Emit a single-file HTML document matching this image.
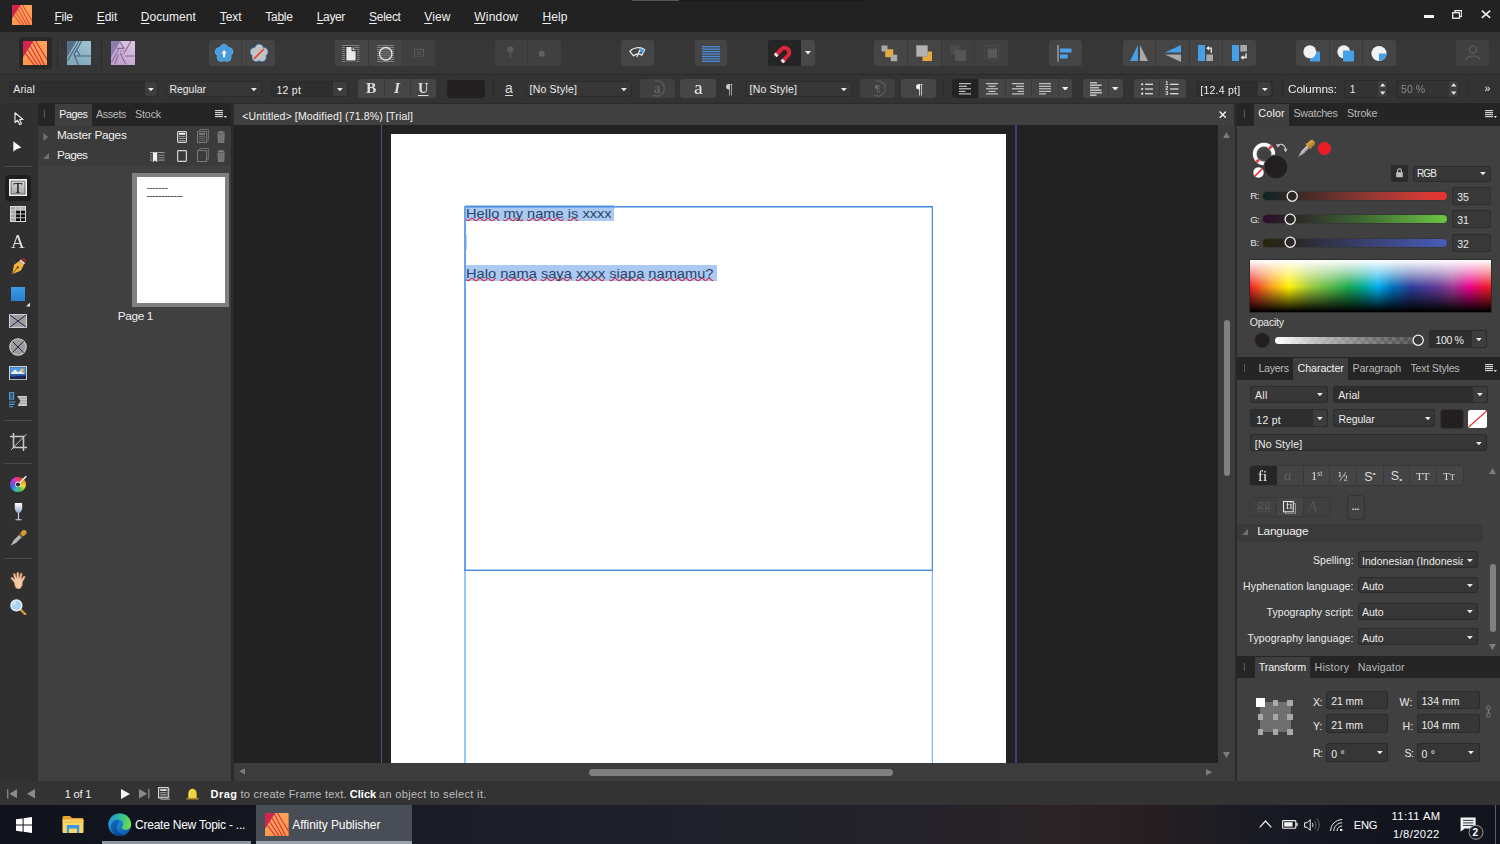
<!DOCTYPE html>
<html lang="en"><head><meta charset="utf-8"><title>Affinity Publisher</title>
<style>
html,body{margin:0;padding:0}
body{width:1500px;height:844px;overflow:hidden;position:relative;background:#2b2b2b;font-family:"Liberation Sans",sans-serif;-webkit-font-smoothing:antialiased}
.b{position:absolute;display:block;box-sizing:border-box}
.t{position:absolute;white-space:nowrap;line-height:1;display:block}
u{text-decoration:underline;text-underline-offset:1.5px;text-decoration-thickness:1px}
</style></head><body>
<div class="b" style="left:0px;top:0px;width:1500px;height:32px;background:#222222;"></div>
<div class="b" style="left:632px;top:0px;width:47px;height:1px;background:#555555;"></div>
<div class="b" style="left:679px;top:0px;width:187px;height:1px;background:#1a1a1a;"></div>
<svg class="b" style="left:11.5px;top:4.5px;" width="20" height="20" viewBox="0 0 24 24"><defs><linearGradient id="pg1" x1="0" y1="0" x2="0.3" y2="1"><stop offset="0" stop-color="#ffa65c"/><stop offset="1" stop-color="#ff9748"/></linearGradient></defs><rect width="24" height="24" fill="url(#pg1)"/><path d="M0 0H10.4L0 16.2Z" fill="#d0264c"/><path d="M13 0L24 18.3M10.4 0L24 23M8.2 3.5L21 24M6.1 6.8L17.6 24M4 10L14.2 24M2.3 12.6L10.9 24" stroke="#cf2b48" stroke-width="1" fill="none" stroke-opacity="0"/><path d="M12.6 0L24 18.6M9.6 1.3L21.4 24M7.2 5L18 24M4.8 8.7L14.6 24M2.4 12.4L11.2 24" stroke="#cf2b48" stroke-width="1.05" fill="none"/></svg>
<span class="t" id="t1" style="top:10.84px;font-size:12px;color:#f0f0f0;left:54.5px;letter-spacing:-0.27px;"><u>F</u>ile</span>
<span class="t" id="t2" style="top:10.84px;font-size:12px;color:#f0f0f0;left:96.7px;letter-spacing:-0.03px;"><u>E</u>dit</span>
<span class="t" id="t3" style="top:10.84px;font-size:12px;color:#f0f0f0;left:140.8px;letter-spacing:0.05px;"><u>D</u>ocument</span>
<span class="t" id="t4" style="top:10.84px;font-size:12px;color:#f0f0f0;left:219.8px;letter-spacing:-0.1px;"><u>T</u>ext</span>
<span class="t" id="t5" style="top:10.84px;font-size:12px;color:#f0f0f0;left:265.2px;letter-spacing:-0.24px;">Ta<u>b</u>le</span>
<span class="t" id="t6" style="top:10.84px;font-size:12px;color:#f0f0f0;left:316.8px;letter-spacing:-0.37px;"><u>L</u>ayer</span>
<span class="t" id="t7" style="top:10.84px;font-size:12px;color:#f0f0f0;left:369.1px;letter-spacing:-0.31px;"><u>S</u>elect</span>
<span class="t" id="t8" style="top:10.84px;font-size:12px;color:#f0f0f0;left:424.3px;letter-spacing:0.12px;"><u>V</u>iew</span>
<span class="t" id="t9" style="top:10.84px;font-size:12px;color:#f0f0f0;left:474.2px;letter-spacing:0.23px;"><u>W</u>indow</span>
<span class="t" id="t10" style="top:10.84px;font-size:12px;color:#f0f0f0;left:542.4px;letter-spacing:0.1px;"><u>H</u>elp</span>
<div class="b" style="left:1424px;top:15px;width:9.5px;height:3px;background:#f2f2f2;"></div>
<svg class="b" style="left:1451.5px;top:9.5px;" width="10.5" height="9" viewBox="0 0 10.5 9"><path d="M3 2.5V0.7H9.8V6.3H8" stroke="#f2f2f2" stroke-width="1.3" fill="none"/><rect x="0.7" y="2.7" width="6.8" height="5.5" stroke="#f2f2f2" stroke-width="1.3" fill="none"/></svg>
<svg class="b" style="left:1480.5px;top:10px;" width="10" height="8.5" viewBox="0 0 10 8.5"><path d="M0.8 0.6L9.2 7.9M9.2 0.6L0.8 7.9" stroke="#f2f2f2" stroke-width="1.5"/></svg>
<div class="b" style="left:0px;top:32px;width:1500px;height:43px;background:linear-gradient(#353535,#383838 55%,#353535);"></div>
<div class="b" style="left:0px;top:74px;width:1500px;height:1px;background:#2a2a2a;"></div>
<div class="b" style="left:19px;top:37px;width:33px;height:32px;background:#292929;border-radius:3px;"></div>
<svg class="b" style="left:23px;top:41px;" width="24" height="24" viewBox="0 0 24 24"><defs><linearGradient id="pg2" x1="0" y1="0" x2="0.3" y2="1"><stop offset="0" stop-color="#ffa65c"/><stop offset="1" stop-color="#ff9748"/></linearGradient></defs><rect width="24" height="24" fill="url(#pg2)"/><path d="M0 0H10.4L0 16.2Z" fill="#d0264c"/><path d="M13 0L24 18.3M10.4 0L24 23M8.2 3.5L21 24M6.1 6.8L17.6 24M4 10L14.2 24M2.3 12.6L10.9 24" stroke="#cf2b48" stroke-width="1" fill="none" stroke-opacity="0"/><path d="M12.6 0L24 18.6M9.6 1.3L21.4 24M7.2 5L18 24M4.8 8.7L14.6 24M2.4 12.4L11.2 24" stroke="#cf2b48" stroke-width="1.05" fill="none"/></svg>
<div class="b" style="left:57px;top:38px;width:1px;height:30px;background:#2b2b2b;"></div>
<div class="b" style="left:101px;top:38px;width:1px;height:30px;background:#2b2b2b;"></div>
<svg class="b" style="left:67px;top:41px;" width="24" height="24" viewBox="0 0 24 24"><defs><linearGradient id="dg" x1="1" y1="0" x2="0.5" y2="1"><stop offset="0" stop-color="#a3c5d0"/><stop offset="1" stop-color="#82aabb"/></linearGradient></defs><rect width="24" height="24" rx="0.6" fill="url(#dg)"/><path d="M0 0H9.6L0 16.6Z" fill="#566f8d"/><path d="M14.7 0L6.9 13.6L11.6 24M12 0L0.6 19.8M7.6 15H24M9.7 9L13.3 15" stroke="#456580" stroke-width="1.15" fill="none"/></svg>
<svg class="b" style="left:111px;top:41px;" width="24" height="24" viewBox="0 0 24 24"><defs><linearGradient id="fg" x1="1" y1="0" x2="0.5" y2="1"><stop offset="0" stop-color="#dfc8e3"/><stop offset="1" stop-color="#c3a2ce"/></linearGradient></defs><rect width="24" height="24" rx="0.6" fill="url(#fg)"/><path d="M0 0H9.6L0 16.6Z" fill="#8d7fac"/><path d="M20.1 0L13.6 11.3M5.8 7.4H13.6M9.3 1.3L12.7 7.4M8 7.4L0.6 21.2M7.5 13L3.6 23.6M14 15H23.6M9.3 12.6L14.9 23.6" stroke="#866a9b" stroke-width="1.1" fill="none"/><circle cx="11.4" cy="11.3" r="2" fill="#d4b8da" stroke="#8b6f9e" stroke-width="0.7"/></svg>
<div class="b" style="left:208.7px;top:40px;width:66.3px;height:25.5px;background:#454545;border-radius:3px;"></div>
<div class="b" style="left:240.5px;top:40px;width:1px;height:25.5px;background:#393939;"></div>
<svg class="b" style="left:214px;top:43px;" width="20" height="20" viewBox="0 0 20 20"><circle cx="10.1" cy="5.4" r="3.9" fill="#479ddb" stroke="#5db1ea" stroke-width="1.2"/><circle cx="14.76" cy="8.79" r="3.9" fill="#479ddb" stroke="#5db1ea" stroke-width="1.2"/><circle cx="12.98" cy="14.26" r="3.9" fill="#479ddb" stroke="#5db1ea" stroke-width="1.2"/><circle cx="7.22" cy="14.26" r="3.9" fill="#479ddb" stroke="#5db1ea" stroke-width="1.2"/><circle cx="5.44" cy="8.79" r="3.9" fill="#479ddb" stroke="#5db1ea" stroke-width="1.2"/><circle cx="10.1" cy="5.7" r="3.9" fill="#479ddb"/><circle cx="14.47" cy="8.88" r="3.9" fill="#479ddb"/><circle cx="12.8" cy="14.02" r="3.9" fill="#479ddb"/><circle cx="7.4" cy="14.02" r="3.9" fill="#479ddb"/><circle cx="5.73" cy="8.88" r="3.9" fill="#479ddb"/><circle cx="10.1" cy="10.3" r="5" fill="#479ddb"/><path d="M10.1 7L12.8 10.6H11.1V14.3H9.1V10.6H7.4Z" fill="#fff"/></svg>
<svg class="b" style="left:248.7px;top:43px;" width="20" height="20" viewBox="0 0 20 20"><circle cx="10.1" cy="5.4" r="3.9" fill="#c3c3c3" stroke="#3f90d8" stroke-width="1.2"/><circle cx="14.76" cy="8.79" r="3.9" fill="#c3c3c3" stroke="#3f90d8" stroke-width="1.2"/><circle cx="12.98" cy="14.26" r="3.9" fill="#c3c3c3" stroke="#3f90d8" stroke-width="1.2"/><circle cx="7.22" cy="14.26" r="3.9" fill="#c3c3c3" stroke="#3f90d8" stroke-width="1.2"/><circle cx="5.44" cy="8.79" r="3.9" fill="#c3c3c3" stroke="#3f90d8" stroke-width="1.2"/><circle cx="10.1" cy="5.7" r="3.9" fill="#c3c3c3"/><circle cx="14.47" cy="8.88" r="3.9" fill="#c3c3c3"/><circle cx="12.8" cy="14.02" r="3.9" fill="#c3c3c3"/><circle cx="7.4" cy="14.02" r="3.9" fill="#c3c3c3"/><circle cx="5.73" cy="8.88" r="3.9" fill="#c3c3c3"/><circle cx="10.1" cy="10.3" r="5" fill="#c3c3c3"/><path d="M4.9 15.9L14.9 6" stroke="#f03a2e" stroke-width="1.5"/></svg>
<div class="b" style="left:335px;top:40px;width:100px;height:25.5px;background:#454545;border-radius:3px;"></div>
<div class="b" style="left:402px;top:40px;width:33px;height:25.5px;background:#404040;border-radius:0 3px 3px 0;"></div>
<div class="b" style="left:367.8px;top:40px;width:1px;height:25.5px;background:#393939;"></div>
<div class="b" style="left:401.5px;top:40px;width:1px;height:25.5px;background:#393939;"></div>
<svg class="b" style="left:342px;top:44.5px;" width="17.5" height="17.5" viewBox="0 0 17.5 17.5"><path d="M0 0.5H17.5" stroke="#878787" stroke-width="0.9"/><path d="M0 2.5H17.5" stroke="#878787" stroke-width="0.9"/><path d="M0 4.5H17.5" stroke="#878787" stroke-width="0.9"/><path d="M0 6.5H17.5" stroke="#878787" stroke-width="0.9"/><path d="M0 8.5H17.5" stroke="#878787" stroke-width="0.9"/><path d="M0 10.5H17.5" stroke="#878787" stroke-width="0.9"/><path d="M0 12.5H17.5" stroke="#878787" stroke-width="0.9"/><path d="M0 14.5H17.5" stroke="#878787" stroke-width="0.9"/><path d="M0 16.5H17.5" stroke="#878787" stroke-width="0.9"/><path d="M3.8 1.5H10L14.2 5.7V16H3.8Z" fill="#e9e9e9" stroke="#2d2d2d" stroke-width="1.1"/><path d="M10 1.5V5.7H14.2" fill="#bdbdbd" stroke="#2d2d2d" stroke-width="0.9"/></svg>
<svg class="b" style="left:376.5px;top:44.5px;" width="17.5" height="17.5" viewBox="0 0 17.5 17.5"><path d="M0 0.5H17.5" stroke="#878787" stroke-width="0.9"/><path d="M0 2.5H17.5" stroke="#878787" stroke-width="0.9"/><path d="M0 4.5H17.5" stroke="#878787" stroke-width="0.9"/><path d="M0 6.5H17.5" stroke="#878787" stroke-width="0.9"/><path d="M0 8.5H17.5" stroke="#878787" stroke-width="0.9"/><path d="M0 10.5H17.5" stroke="#878787" stroke-width="0.9"/><path d="M0 12.5H17.5" stroke="#878787" stroke-width="0.9"/><path d="M0 14.5H17.5" stroke="#878787" stroke-width="0.9"/><path d="M0 16.5H17.5" stroke="#878787" stroke-width="0.9"/><circle cx="8.75" cy="8.75" r="6.2" fill="#5c5c5c" fill-opacity="0.55" stroke="#e4e4e4" stroke-width="1.4"/></svg>
<svg class="b" style="left:413.5px;top:48.5px;" width="10" height="8.5" viewBox="0 0 10 8.5"><rect x="0.5" y="0.5" width="9" height="7.5" fill="none" stroke="#5b5b5b"/><path d="M3 2.2L7 6.3M7 2.2L3 6.3" stroke="#5b5b5b" stroke-width="1"/></svg>
<div class="b" style="left:494.7px;top:40px;width:66.1px;height:25.5px;background:#454545;border-radius:3px;"></div>
<div class="b" style="left:494.7px;top:40px;width:32.3px;height:25.5px;background:#404040;border-radius:3px 0 0 3px;"></div>
<div class="b" style="left:527px;top:40px;width:33.8px;height:25.5px;background:#404040;border-radius:0 3px 3px 0;"></div>
<div class="b" style="left:526.5px;top:40px;width:1px;height:25.5px;background:#393939;"></div>
<svg class="b" style="left:506px;top:45px;" width="9" height="16" viewBox="0 0 9 16"><circle cx="4.5" cy="4.6" r="3.1" fill="#5c5c5c"/><path d="M4.5 6V13.2" stroke="#5c5c5c" stroke-width="1.2"/></svg>
<svg class="b" style="left:539px;top:50.5px;" width="6" height="6" viewBox="0 0 6 6"><rect width="5.5" height="5.5" fill="#606060"/></svg>
<div class="b" style="left:621px;top:40px;width:32.8px;height:25.5px;background:#454545;border-radius:3px;"></div>
<svg class="b" style="left:629px;top:46px;" width="16.5" height="11.5" viewBox="0 0 20 14"><path d="M1 6.5C5.5 1.2 14 0.8 19 4.5L15.5 11.2C13 9.3 9 9.3 5.5 12Z" fill="none" stroke="#f2f2f2" stroke-width="1.5" stroke-linejoin="round"/><path d="M14.2 2.6L18.6 4.8L16.3 8.8L12.4 6.8Z" fill="#3f9ae6"/><path d="M13.4 4.3L9.5 13.5" stroke="#f2f2f2" stroke-width="1.4"/></svg>
<div class="b" style="left:694.7px;top:40px;width:32.5px;height:25.5px;background:#454545;border-radius:3px;"></div>
<svg class="b" style="left:701.5px;top:45.5px;" width="18" height="16" viewBox="0 0 18 16"><path d="M0 0.7H18" stroke="#4d8fe0" stroke-width="1.25"/><path d="M0 3.13H18" stroke="#4d8fe0" stroke-width="1.25"/><path d="M0 5.56H18" stroke="#4d8fe0" stroke-width="1.25"/><path d="M0 7.99H18" stroke="#4d8fe0" stroke-width="1.25"/><path d="M0 10.42H18" stroke="#4d8fe0" stroke-width="1.25"/><path d="M0 12.85H18" stroke="#4d8fe0" stroke-width="1.25"/><path d="M0 15.28H18" stroke="#4d8fe0" stroke-width="1.25"/></svg>
<div class="b" style="left:768px;top:40px;width:33px;height:25.5px;background:#252525;border-radius:3px 0 0 3px;"></div>
<div class="b" style="left:801px;top:40px;width:14px;height:25.5px;background:#484848;border-radius:0 3px 3px 0;"></div>
<svg class="b" style="left:804.7px;top:51.45px;" width="6" height="3.5" viewBox="0 0 6 3.5"><path d="M0 0H6 L3 3.5 Z" fill="#f0f0f0"/></svg>
<svg class="b" style="left:773px;top:42px;" width="22" height="22" viewBox="0 0 22 22"><g transform="rotate(42 11 11)"><path d="M4.5 19V10A6.5 6.5 0 0 1 17.5 10V19H13.6V10.2A2.6 2.6 0 0 0 8.4 10.2V19Z" fill="#e5213c"/><path d="M4.5 19V16.3H8.4V19ZM13.6 19V16.3H17.5V19Z" fill="#f1efe9"/><path d="M4.5 16.3H8.4M13.6 16.3H17.5" stroke="#8a8a8a" stroke-width="0.5"/></g></svg>
<div class="b" style="left:874.2px;top:40px;width:133.8px;height:25.5px;background:#454545;border-radius:3px;"></div>
<div class="b" style="left:941.2px;top:40px;width:33.5px;height:25.5px;background:#404040;border-radius:0;"></div>
<div class="b" style="left:974.7px;top:40px;width:33.3px;height:25.5px;background:#404040;border-radius:0 3px 3px 0;"></div>
<div class="b" style="left:907px;top:40px;width:1px;height:25.5px;background:#393939;"></div>
<div class="b" style="left:940.7px;top:40px;width:1px;height:25.5px;background:#393939;"></div>
<div class="b" style="left:974.2px;top:40px;width:1px;height:25.5px;background:#393939;"></div>
<svg class="b" style="left:881px;top:45px;" width="17" height="17" viewBox="0 0 17 17"><rect x="0.5" y="0.5" width="6" height="6" fill="#a9a9a9"/><rect x="4.2" y="4.2" width="8" height="8" fill="#e8a93a"/><rect x="4.2" y="4.2" width="2.3" height="2.3" fill="#a9a9a9"/><rect x="9.7" y="9.7" width="6.5" height="6.5" fill="#ababab"/></svg>
<svg class="b" style="left:916px;top:45px;" width="17" height="17" viewBox="0 0 17 17"><rect x="6.5" y="6.5" width="9.5" height="9.5" fill="#e8a93a"/><rect x="0.5" y="0.5" width="11" height="11" fill="#b2b2b2"/><rect x="0.5" y="0.5" width="11" height="11" fill="none" stroke="#9a9a9a" stroke-width="0.6"/></svg>
<svg class="b" style="left:950px;top:45px;" width="17" height="17" viewBox="0 0 17 17"><rect x="0.5" y="0.5" width="9" height="9" fill="#4c4c4c"/><rect x="5" y="5" width="11" height="11" fill="#565656"/></svg>
<svg class="b" style="left:984px;top:45px;" width="17" height="17" viewBox="0 0 17 17"><rect x="0.5" y="0.5" width="14" height="14" fill="none" stroke="#494949" stroke-width="1"/><rect x="3.5" y="3.5" width="9.5" height="9.5" fill="#585858"/></svg>
<div class="b" style="left:1049.2px;top:40px;width:33px;height:25.5px;background:#454545;border-radius:3px;"></div>
<svg class="b" style="left:1057px;top:45px;" width="15" height="17" viewBox="0 0 15 17"><path d="M1 0V16.5" stroke="#a8a8a8" stroke-width="1.3"/><rect x="3" y="3.5" width="11.5" height="4" fill="#48a2ea"/><rect x="3" y="9.5" width="7.8" height="4" fill="#48a2ea"/></svg>
<div class="b" style="left:1122.8px;top:40px;width:133.4px;height:25.5px;background:#454545;border-radius:3px;"></div>
<div class="b" style="left:1155px;top:40px;width:1px;height:25.5px;background:#393939;"></div>
<div class="b" style="left:1188.7px;top:40px;width:1px;height:25.5px;background:#393939;"></div>
<div class="b" style="left:1222.3px;top:40px;width:1px;height:25.5px;background:#393939;"></div>
<svg class="b" style="left:1129.5px;top:45px;" width="18" height="16.5" viewBox="0 0 18 16.5"><path d="M8 0V16H0Z" fill="#45a0e8"/><path d="M10 0V16H18Z" fill="#a9a9a9"/></svg>
<svg class="b" style="left:1165px;top:44.5px;" width="16" height="17" viewBox="0 0 16 17"><path d="M16 0V7.4H0Z" fill="#45a0e8"/><path d="M16 17V9.4H0Z" fill="#a9a9a9"/></svg>
<svg class="b" style="left:1198px;top:45px;" width="16" height="16.5" viewBox="0 0 16 16.5"><rect x="0" y="0" width="7" height="16" fill="#45a0e8"/><rect x="8.3" y="9.5" width="6.7" height="6.5" fill="#a9a9a9"/><path d="M9 3.2H13.2V7.8" fill="none" stroke="#f4f4f4" stroke-width="1.3"/><path d="M8.3 3.2L11 1V5.4Z" fill="#f4f4f4"/></svg>
<svg class="b" style="left:1232px;top:45px;" width="16" height="16.5" viewBox="0 0 16 16.5"><rect x="0" y="0" width="7" height="16" fill="#45a0e8"/><rect x="8.3" y="0" width="6.7" height="6.5" fill="#a9a9a9"/><path d="M14 8.5V12.5H10" fill="none" stroke="#f4f4f4" stroke-width="1.3"/><path d="M8.6 12.5L11.4 10.2V14.8Z" fill="#f4f4f4"/></svg>
<div class="b" style="left:1296.2px;top:40px;width:100px;height:25.5px;background:#454545;border-radius:3px;"></div>
<div class="b" style="left:1329px;top:40px;width:1px;height:25.5px;background:#393939;"></div>
<div class="b" style="left:1362.3px;top:40px;width:1px;height:25.5px;background:#393939;"></div>
<svg class="b" style="left:1303px;top:45px;" width="18" height="17" viewBox="0 0 18 17"><rect x="7" y="6.5" width="10" height="10" fill="#45a0e8"/><circle cx="6.8" cy="6.8" r="6.5" fill="#f1f1f1"/></svg>
<svg class="b" style="left:1337px;top:45px;" width="18" height="17" viewBox="0 0 18 17"><circle cx="6.8" cy="6.8" r="6.5" fill="#f1f1f1"/><rect x="6" y="5.5" width="11" height="11" fill="#45a0e8"/></svg>
<svg class="b" style="left:1371px;top:45px;" width="18" height="17" viewBox="0 0 18 17"><circle cx="8" cy="8.5" r="7.6" fill="#f1f1f1"/><path d="M8 8.5H15.6A7.6 7.6 0 0 1 8 16.1Z" fill="#45a0e8"/></svg>
<div class="b" style="left:1456.3px;top:40px;width:32.9px;height:25.5px;background:#454545;border-radius:3px;"></div>
<div class="b" style="left:1456.3px;top:40px;width:32.9px;height:25.5px;background:#404040;border-radius:3px;"></div>
<svg class="b" style="left:1464.5px;top:45px;" width="16" height="16" viewBox="0 0 16 16"><circle cx="8" cy="4.6" r="3.6" fill="none" stroke="#5e5e5e" stroke-width="1.2"/><path d="M0.8 15.5C2 9.5 14 9.5 15.2 15.5" fill="none" stroke="#5e5e5e" stroke-width="1.2"/></svg>
<div class="b" style="left:0px;top:75px;width:1500px;height:28px;background:#333333;"></div>
<div class="b" style="left:9px;top:81px;width:149px;height:16px;background:#2e2e2e;border-radius:3px;box-shadow:inset 0 0 0 1px #2b2b2b;"></div>
<div class="b" style="left:145px;top:82px;width:12px;height:14px;background:#3d3d3d;border-radius:0 2px 2px 0;"></div>
<svg class="b" style="left:148.3px;top:87.95px;" width="5.8" height="3.3" viewBox="0 0 5.8 3.3"><path d="M0 0H5.8 L2.9 3.3 Z" fill="#e8e8e8"/></svg>
<span class="t" id="t11" style="top:84.31px;font-size:10.5px;color:#ececec;left:13.3px;letter-spacing:0.12px;">Arial</span>
<div class="b" style="left:166px;top:81px;width:96px;height:16px;background:linear-gradient(#393939,#353535);border-radius:3px;box-shadow:inset 0 0 0 1px #2b2b2b;"></div>
<svg class="b" style="left:251.3px;top:87.95px;" width="5.8" height="3.3" viewBox="0 0 5.8 3.3"><path d="M0 0H5.8 L2.9 3.3 Z" fill="#e8e8e8"/></svg>
<span class="t" id="t12" style="top:84.31px;font-size:10.5px;color:#ececec;left:169.5px;letter-spacing:-0.05px;">Regular</span>
<div class="b" style="left:271px;top:81px;width:76.5px;height:16px;background:#2e2e2e;border-radius:3px;box-shadow:inset 0 0 0 1px #2b2b2b;"></div>
<div class="b" style="left:333px;top:82px;width:13.5px;height:14px;background:#3d3d3d;border-radius:0 2px 2px 0;"></div>
<svg class="b" style="left:337.05px;top:87.95px;" width="5.8" height="3.3" viewBox="0 0 5.8 3.3"><path d="M0 0H5.8 L2.9 3.3 Z" fill="#e8e8e8"/></svg>
<span class="t" id="t13" style="top:84.81px;font-size:10.5px;color:#ececec;left:276.5px;letter-spacing:0.25px;">12 pt</span>
<div class="b" style="left:358px;top:79px;width:78.3px;height:18.5px;background:#454545;border-radius:3px;"></div>
<div class="b" style="left:383.5px;top:79px;width:1px;height:18.5px;background:#393939;"></div>
<div class="b" style="left:409.5px;top:79px;width:1px;height:18.5px;background:#393939;"></div>
<span class="t" id="t14" style="top:79.88px;font-size:15.5px;color:#dcdcdc;left:366px;font-weight:700;font-family:'Liberation Serif',serif;will-change:transform;">B</span>
<span class="t" id="t15" style="top:79.88px;font-size:15.5px;color:#dcdcdc;left:394px;font-weight:700;font-family:'Liberation Serif',serif;will-change:transform;font-style:italic;">I</span>
<span class="t" id="t16" style="top:80.53px;font-size:14.5px;color:#dcdcdc;left:417.5px;font-weight:700;font-family:'Liberation Serif',serif;will-change:transform;text-decoration:underline;text-underline-offset:1.5px;">U</span>
<div class="b" style="left:446.7px;top:79.5px;width:38px;height:18.3px;background:#231f20;border-radius:3px;box-shadow:0 0 0 1px #323232;"></div>
<div class="b" style="left:493px;top:79px;width:1px;height:19px;background:#2a2a2a;"></div>
<span class="t" id="t17" style="top:81.45px;font-size:14px;color:#d8d8d8;left:505px;text-decoration:underline;text-underline-offset:2px;">a</span>
<div class="b" style="left:526px;top:81px;width:106px;height:16px;background:linear-gradient(#393939,#353535);border-radius:3px;box-shadow:inset 0 0 0 1px #2b2b2b;"></div>
<svg class="b" style="left:621.3px;top:87.95px;" width="5.8" height="3.3" viewBox="0 0 5.8 3.3"><path d="M0 0H5.8 L2.9 3.3 Z" fill="#e8e8e8"/></svg>
<span class="t" id="t18" style="top:84.31px;font-size:10.5px;color:#ececec;left:529.5px;letter-spacing:0.21px;">[No Style]</span>
<div class="b" style="left:640px;top:79px;width:35px;height:18.5px;background:#404040;border-radius:3px;"></div>
<span class="t" id="t19" style="top:81.43px;font-size:14.5px;color:#6e6e6e;left:654px;font-family:'Liberation Serif',serif;will-change:transform;">a</span>
<svg class="b" style="left:648px;top:80px;" width="18" height="17" viewBox="0 0 18 17"><path d="M6.5 1.2A7.6 7.6 0 1 1 5 15" fill="none" stroke="#5e5e5e" stroke-width="1.1"/></svg>
<div class="b" style="left:680.3px;top:79px;width:35.5px;height:18.5px;background:#464646;border-radius:3px;"></div>
<span class="t" id="t20" style="top:77.99px;font-size:19.5px;color:#ececec;left:693.8px;font-family:'Liberation Serif',serif;will-change:transform;">a</span>
<span class="t" id="t21" style="top:81.73px;font-size:14.5px;color:#d0d0d0;left:726px;font-family:'Liberation Serif',serif;will-change:transform;">¶</span>
<div class="b" style="left:746px;top:81px;width:106px;height:16px;background:linear-gradient(#393939,#353535);border-radius:3px;box-shadow:inset 0 0 0 1px #2b2b2b;"></div>
<svg class="b" style="left:841.3px;top:87.95px;" width="5.8" height="3.3" viewBox="0 0 5.8 3.3"><path d="M0 0H5.8 L2.9 3.3 Z" fill="#e8e8e8"/></svg>
<span class="t" id="t22" style="top:84.31px;font-size:10.5px;color:#ececec;left:749.5px;letter-spacing:0.21px;">[No Style]</span>
<div class="b" style="left:860px;top:79px;width:35px;height:18.5px;background:#404040;border-radius:3px;"></div>
<span class="t" id="t23" style="top:82.69px;font-size:11px;color:#6e6e6e;left:875.2px;font-family:'Liberation Serif',serif;will-change:transform;">¶</span>
<svg class="b" style="left:868.5px;top:80px;" width="18" height="17" viewBox="0 0 18 17"><path d="M6.5 1.2A7.6 7.6 0 1 1 5 15" fill="none" stroke="#5e5e5e" stroke-width="1.1"/></svg>
<div class="b" style="left:901px;top:79px;width:35px;height:18.5px;background:#464646;border-radius:3px;"></div>
<span class="t" id="t24" style="top:81.6px;font-size:15px;color:#f0f0f0;left:915.5px;font-family:'Liberation Serif',serif;will-change:transform;">¶</span>
<div class="b" style="left:942.5px;top:79px;width:1px;height:19px;background:#2a2a2a;"></div>
<div class="b" style="left:952.2px;top:79px;width:119.8px;height:18.5px;background:#454545;border-radius:3px;"></div>
<div class="b" style="left:978px;top:79px;width:1px;height:18.5px;background:#393939;"></div>
<div class="b" style="left:1004.8px;top:79px;width:1px;height:18.5px;background:#393939;"></div>
<div class="b" style="left:1031.2px;top:79px;width:1px;height:18.5px;background:#393939;"></div>
<div class="b" style="left:1057.8px;top:79px;width:1px;height:18.5px;background:#393939;"></div>
<div class="b" style="left:952.2px;top:79px;width:26.3px;height:18.5px;background:#232323;border-radius:3px 0 0 3px;"></div>
<svg class="b" style="left:959.3px;top:83px;" width="12" height="12.75" viewBox="0 0 12 12.75"><path d="M0 0.7H12" stroke="#dedede" stroke-width="1.0"/><path d="M0 3.25H8" stroke="#dedede" stroke-width="1.0"/><path d="M0 5.8H12" stroke="#dedede" stroke-width="1.0"/><path d="M0 8.35H6.5" stroke="#dedede" stroke-width="1.0"/><path d="M0 10.9H12" stroke="#dedede" stroke-width="1.0"/></svg>
<svg class="b" style="left:985.7px;top:83px;" width="12" height="12.75" viewBox="0 0 12 12.75"><path d="M0 0.7H12" stroke="#dedede" stroke-width="1.0"/><path d="M2.5 3.25H9.5" stroke="#dedede" stroke-width="1.0"/><path d="M0 5.8H12" stroke="#dedede" stroke-width="1.0"/><path d="M2.5 8.35H9.5" stroke="#dedede" stroke-width="1.0"/><path d="M0 10.9H12" stroke="#dedede" stroke-width="1.0"/></svg>
<svg class="b" style="left:1012.3px;top:83px;" width="12" height="12.75" viewBox="0 0 12 12.75"><path d="M0 0.7H12" stroke="#dedede" stroke-width="1.0"/><path d="M4 3.25H12" stroke="#dedede" stroke-width="1.0"/><path d="M0 5.8H12" stroke="#dedede" stroke-width="1.0"/><path d="M5.5 8.35H12" stroke="#dedede" stroke-width="1.0"/><path d="M0 10.9H12" stroke="#dedede" stroke-width="1.0"/></svg>
<svg class="b" style="left:1038.8px;top:83px;" width="12" height="12.75" viewBox="0 0 12 12.75"><path d="M0 0.7H12" stroke="#dedede" stroke-width="1.0"/><path d="M0 3.25H12" stroke="#dedede" stroke-width="1.0"/><path d="M0 5.8H12" stroke="#dedede" stroke-width="1.0"/><path d="M0 8.35H12" stroke="#dedede" stroke-width="1.0"/><path d="M0 10.9H7" stroke="#dedede" stroke-width="1.0"/></svg>
<svg class="b" style="left:1061.75px;top:86.7px;" width="6.5" height="3.8" viewBox="0 0 6.5 3.8"><path d="M0 0H6.5 L3.25 3.8 Z" fill="#f0f0f0"/></svg>
<div class="b" style="left:1082.8px;top:79px;width:40px;height:18.5px;background:#454545;border-radius:3px;"></div>
<div class="b" style="left:1108.3px;top:79px;width:1px;height:18.5px;background:#393939;"></div>
<svg class="b" style="left:1089.5px;top:81.5px;" width="12" height="15" viewBox="0 0 12 15"><path d="M0 0.7H7" stroke="#bdbdbd" stroke-width="1.6"/><path d="M0 3.2H11.5" stroke="#bdbdbd" stroke-width="1.6"/><path d="M0 5.7H9" stroke="#bdbdbd" stroke-width="1.6"/><path d="M0 8.2H11.5" stroke="#bdbdbd" stroke-width="1.6"/><path d="M0 10.7H12" stroke="#bdbdbd" stroke-width="1.6"/><path d="M0 13.2H6.5" stroke="#bdbdbd" stroke-width="1.6"/></svg>
<svg class="b" style="left:1112.25px;top:86.7px;" width="6.5" height="3.8" viewBox="0 0 6.5 3.8"><path d="M0 0H6.5 L3.25 3.8 Z" fill="#f0f0f0"/></svg>
<div class="b" style="left:1133.8px;top:79px;width:52px;height:18.5px;background:#454545;border-radius:3px;"></div>
<div class="b" style="left:1159px;top:79px;width:1px;height:18.5px;background:#393939;"></div>
<svg class="b" style="left:1140.5px;top:82.5px;" width="13" height="12" viewBox="0 0 13 12"><circle cx="1.2" cy="1.3" r="1.1" fill="#e8e8e8"/><path d="M4 1.3H12" stroke="#e8e8e8" stroke-width="1.2"/><circle cx="1.2" cy="6" r="1.1" fill="#e8e8e8"/><path d="M4 6H12" stroke="#e8e8e8" stroke-width="1.2"/><circle cx="1.2" cy="10.7" r="1.1" fill="#e8e8e8"/><path d="M4 10.7H12" stroke="#e8e8e8" stroke-width="1.2"/></svg>
<svg class="b" style="left:1169.5px;top:82.5px;" width="9" height="12" viewBox="0 0 9 12"><path d="M0 1.3H8.5" stroke="#e8e8e8" stroke-width="1.2"/><path d="M0 6H8.5" stroke="#e8e8e8" stroke-width="1.2"/><path d="M0 10.7H8.5" stroke="#e8e8e8" stroke-width="1.2"/></svg>
<span class="t" id="t25" style="top:81.26px;font-size:5.6px;color:#e8e8e8;left:1165.2px;font-weight:700;">1</span>
<span class="t" id="t26" style="top:85.96px;font-size:5.6px;color:#e8e8e8;left:1165.2px;font-weight:700;">2</span>
<span class="t" id="t27" style="top:90.66px;font-size:5.6px;color:#e8e8e8;left:1165.2px;font-weight:700;">3</span>
<div class="b" style="left:1196px;top:81px;width:76.5px;height:16px;background:#2e2e2e;border-radius:3px;box-shadow:inset 0 0 0 1px #2b2b2b;"></div>
<div class="b" style="left:1258.3px;top:82px;width:13.2px;height:14px;background:#3d3d3d;border-radius:0 2px 2px 0;"></div>
<svg class="b" style="left:1262.2px;top:87.95px;" width="5.8" height="3.3" viewBox="0 0 5.8 3.3"><path d="M0 0H5.8 L2.9 3.3 Z" fill="#e8e8e8"/></svg>
<span class="t" id="t28" style="top:84.61px;font-size:10.5px;color:#ececec;left:1200.3px;letter-spacing:0.24px;">[12.4 pt]</span>
<div class="b" style="left:1281.5px;top:79px;width:1px;height:19px;background:#2a2a2a;"></div>
<span class="t" id="t29" style="top:84.31px;font-size:11.8px;color:#ececec;left:1288px;letter-spacing:-0.13px;">Columns:</span>
<div class="b" style="left:1344.2px;top:80px;width:43.5px;height:18px;background:#333333;border-radius:3px;box-shadow:inset 0 0 0 1px #2a2a2a;"></div>
<div class="b" style="left:1377.7px;top:81px;width:9px;height:16px;background:#3f3f3f;border-radius:0 2px 2px 0;"></div>
<svg class="b" style="left:1379.7px;top:83px;" width="5.5" height="12" viewBox="0 0 5.5 12"><path d="M0 3.6L2.75 0.3L5.5 3.6Z M0 8.4L2.75 11.7L5.5 8.4Z" fill="#e8e8e8"/></svg>
<span class="t" id="t30" style="top:84.31px;font-size:10.5px;color:#ececec;left:1349.7px;">1</span>
<div class="b" style="left:1395.5px;top:80px;width:63px;height:18px;background:#333333;border-radius:3px;box-shadow:inset 0 0 0 1px #2a2a2a;"></div>
<div class="b" style="left:1448.5px;top:81px;width:9px;height:16px;background:#3f3f3f;border-radius:0 2px 2px 0;"></div>
<svg class="b" style="left:1450.5px;top:83px;" width="5.5" height="12" viewBox="0 0 5.5 12"><path d="M0 3.6L2.75 0.3L5.5 3.6Z M0 8.4L2.75 11.7L5.5 8.4Z" fill="#e8e8e8"/></svg>
<span class="t" id="t31" style="top:84.31px;font-size:10.5px;color:#8c8c8c;left:1401px;letter-spacing:0.04px;">50 %</span>
<div class="b" style="left:1468px;top:79px;width:1px;height:19px;background:#2a2a2a;"></div>
<span class="t" id="t32" style="top:83.11px;font-size:10.5px;color:#f0f0f0;left:1484.6px;">»</span>
<div class="b" style="left:0px;top:103px;width:37.5px;height:678px;background:#303030;"></div>
<svg class="b" style="left:13.5px;top:112px;" width="11" height="13.5" viewBox="0 0 11 13.5"><path d="M1 0.8V10.6L3.6 8.2L5.6 12.6L7.5 11.7L5.6 7.5H9Z" fill="#2b2b2b" stroke="#e9e9e9" stroke-width="1.15" stroke-linejoin="round"/></svg>
<svg class="b" style="left:13.2px;top:140.7px;" width="9" height="11.5" viewBox="0 0 9 11.5"><path d="M0.3 0.2V10.8L3.4 8.2L8.4 6.6Z" fill="#f6f6f6"/></svg>
<div class="b" style="left:4.2px;top:166px;width:27.5px;height:1px;background:#4a4a4a;"></div>
<div class="b" style="left:5px;top:174.7px;width:26px;height:26px;background:#1f1f1f;border-radius:3.5px;"></div>
<svg class="b" style="left:9px;top:179px;" width="18" height="17" viewBox="0 0 18 17"><defs><linearGradient id="ftg" x1="0" y1="0" x2="0" y2="1"><stop offset="0" stop-color="#dadada"/><stop offset="1" stop-color="#a4a4a4"/></linearGradient></defs><rect x="0.6" y="0.6" width="16.8" height="15.8" fill="url(#ftg)" stroke="#f0f0f0" stroke-width="1.2"/><rect x="2.2" y="2.2" width="13.6" height="12.6" fill="none" stroke="#6e6e6e" stroke-width="0.7"/></svg>
<svg class="b" style="left:9px;top:179px;opacity:0.999;" width="18" height="17" viewBox="0 0 18 17"><text x="9" y="14.1" text-anchor="middle" font-family="Liberation Serif,serif" font-size="14.5" fill="#0c0c0c" style="will-change:transform">T</text></svg>
<svg class="b" style="left:10px;top:206px;" width="16" height="16" viewBox="0 0 16 16"><rect x="0.5" y="0.5" width="15" height="15" fill="#0c0c0c"/><rect x="0.5" y="0.5" width="15" height="3.6" fill="#b4b4b4"/><rect x="0.5" y="0.5" width="4.8" height="15" fill="#a9a9a9"/><path d="M5.4 0.5V15.5M10.5 0.5V15.5M0.5 4.2H15.5M0.5 8H15.5M0.5 11.8H15.5" stroke="#d6d6d6" stroke-width="0.9"/><rect x="0.5" y="0.5" width="15" height="15" fill="none" stroke="#d9d9d9" stroke-width="1"/></svg>
<span class="t" id="t33" style="top:231.92px;font-size:19px;color:#dedede;left:10.6px;font-family:'Liberation Serif',serif;will-change:transform;">A</span>
<svg class="b" style="left:10px;top:258px;" width="17" height="17" viewBox="0 0 17 17"><g transform="rotate(40 8.5 8.5)"><rect x="6" y="-1.5" width="5" height="3.2" fill="#8d2b1f"/><rect x="5.6" y="1.7" width="5.8" height="2" fill="#e4e4e4"/><path d="M5.6 3.7H11.4L13 10L8.5 18.5L4 10Z" fill="#f0b53e"/><path d="M8.5 18.5V10.5" stroke="#6b4a10" stroke-width="0.9"/><circle cx="8.5" cy="9.6" r="1.2" fill="#6b4a10"/></g></svg>
<div class="b" style="left:11.3px;top:287.4px;width:13.5px;height:13.2px;background:linear-gradient(#3d9be6,#2a7fd2);"></div>
<svg class="b" style="left:25.5px;top:302px;" width="4.5" height="4.5" viewBox="0 0 4.5 4.5"><path d="M4.5 0V4.5H0Z" fill="#e6e6e6"/></svg>
<svg class="b" style="left:9px;top:313.5px;" width="18" height="14" viewBox="0 0 18 14"><rect x="0.6" y="0.6" width="16.8" height="12.8" fill="#9c9c9c" stroke="#d6d6d6" stroke-width="1.1"/><path d="M1 1L17 13M17 1L1 13" stroke="#1c2852" stroke-width="1"/></svg>
<svg class="b" style="left:9px;top:338px;" width="18" height="18" viewBox="0 0 18 18"><circle cx="9" cy="9" r="8.2" fill="#9c9c9c" stroke="#d6d6d6" stroke-width="1.1"/><path d="M3.4 3.4L14.6 14.6M14.6 3.4L3.4 14.6" stroke="#1c2852" stroke-width="1"/></svg>
<svg class="b" style="left:9px;top:366.3px;" width="18" height="14.2" viewBox="0 0 18 14.2"><rect x="0.5" y="0.5" width="17" height="13.2" fill="#16264e" stroke="#cfcfcf" stroke-width="1"/><rect x="1.2" y="1.2" width="15.6" height="6" fill="#4f9be6"/><circle cx="13" cy="4.2" r="1.7" fill="#f4b83a"/><path d="M1.2 8L6 3.6L9 6.2L11 5L16.8 8Z" fill="#e9eef6"/><path d="M1.2 8H16.8V10C10 9 7 11 1.2 10.5Z" fill="#2c5aa6"/></svg>
<svg class="b" style="left:9px;top:392px;" width="18" height="16" viewBox="0 0 18 16"><rect x="0.6" y="0.6" width="4" height="6.5" fill="none" stroke="#4d9ee6" stroke-width="1.1"/><path d="M0.6 3H4.6M0.6 5H4.6" stroke="#4d9ee6" stroke-width="0.8"/><path d="M0 10H6.5M0 12.4H5.5M0 14.8H4" stroke="#4d9ee6" stroke-width="1.1"/><path d="M8 4H18V14H8.5L11.5 9Z" fill="#c9c9c9"/><path d="M10 6.3H18M11 8.8H18M10.5 11.3H18" stroke="#8e8e8e" stroke-width="0.8"/></svg>
<div class="b" style="left:4.2px;top:420.3px;width:27.5px;height:1px;background:#4a4a4a;"></div>
<svg class="b" style="left:10px;top:433px;" width="17" height="18" viewBox="0 0 17 18"><path d="M3.5 0V14.5H17M0 3.5H13.5V18" fill="none" stroke="#c9c9c9" stroke-width="1.5"/><path d="M1 17L16.5 1" stroke="#c9c9c9" stroke-width="1"/></svg>
<div class="b" style="left:4.2px;top:463px;width:27.5px;height:1px;background:#4a4a4a;"></div>
<div class="b" style="left:10px;top:476.5px;width:15.5px;height:15.5px;border-radius:50%;background:conic-gradient(from 20deg,#e8322c,#f2a22c,#e9e23a,#4cc04a,#3ab7c7,#3a6fe0,#8a45d6,#e23ac0,#e8322c);"></div>
<svg class="b" style="left:15px;top:474.5px;" width="12.5" height="12.5" viewBox="0 0 12.5 12.5"><path d="M2.2 10.3L11.3 1.2" stroke="#f3f3f3" stroke-width="1.6"/><circle cx="3" cy="9.5" r="2.6" fill="#2b2b2b" stroke="#f3f3f3" stroke-width="1"/></svg>
<svg class="b" style="left:13.5px;top:503px;" width="9" height="17.5" viewBox="0 0 9 17.5"><defs><linearGradient id="gl" x1="0" y1="0" x2="0" y2="1"><stop offset="0" stop-color="#ffffff"/><stop offset="1" stop-color="#8fa6cf"/></linearGradient></defs><path d="M1 0H8C8.6 4.5 8.6 9 4.5 10.3C0.4 9 0.4 4.5 1 0Z" fill="url(#gl)"/><path d="M4.5 10V16.2M1.5 16.7H7.5" stroke="#cfd7ea" stroke-width="1.1"/></svg>
<svg class="b" style="left:10px;top:529.5px;" width="16.5" height="16.5" viewBox="0 0 16.5 16.5"><g transform="rotate(45 8.25 8.25)"><ellipse cx="8.25" cy="0.8" rx="2.6" ry="3.3" fill="#d39a35"/><rect x="5.8" y="3.6" width="4.9" height="1.8" fill="#7a5a1e"/><path d="M6.5 5.4H10V13L8.25 19L6.5 13Z" fill="#b9b9b9"/></g></svg>
<div class="b" style="left:4.2px;top:558px;width:27.5px;height:1px;background:#4a4a4a;"></div>
<svg class="b" style="left:9.5px;top:571.5px;" width="17" height="17.5" viewBox="0 0 17 17.5"><path d="M4.4 10.8L1 6.6C0.4 5.6 1.8 4.7 2.6 5.6L4.6 7.7L3.4 2.3C3.2 1.1 4.8 0.7 5.2 1.9L6.6 6.3L6.9 1C7 -0.2 8.7 -0.2 8.8 1L9 6.3L10.5 1.7C10.9 0.6 12.5 1 12.2 2.2L11.1 7.2L13.6 4.4C14.4 3.5 15.7 4.5 15 5.5L12.6 9.7C12.6 14 11 17 8.3 17C6 17 4.6 14.4 4.4 10.8Z" fill="#f6c9a2" stroke="#b07a56" stroke-width="0.6"/></svg>
<svg class="b" style="left:10px;top:598.8px;" width="16.5" height="16.5" viewBox="0 0 16.5 16.5"><path d="M10 10L15.3 15.3" stroke="#d69a3a" stroke-width="2.4" stroke-linecap="round"/><circle cx="6.4" cy="6.4" r="5.4" fill="#a9d3f5" stroke="#e9eff6" stroke-width="1.5"/><path d="M3.3 6A3.3 3.3 0 0 1 6 3.2" stroke="#fff" stroke-width="1" fill="none"/></svg>
<div class="b" style="left:38px;top:103px;width:193px;height:678px;background:#404040;"></div>
<div class="b" style="left:38px;top:103px;width:193px;height:22.5px;background:#252525;"></div>
<div class="b" style="left:44px;top:110px;width:1px;height:7.5px;background:#5a5a5a;"></div>
<div class="b" style="left:55px;top:104px;width:36.5px;height:21.5px;background:#3f3f3f;"></div>
<span class="t" id="t34" style="top:108.74px;font-size:10.7px;color:#f4f4f4;left:59.3px;letter-spacing:-0.44px;">Pages</span>
<span class="t" id="t35" style="top:108.74px;font-size:10.7px;color:#b9b9b9;left:96px;letter-spacing:-0.33px;">Assets</span>
<span class="t" id="t36" style="top:108.74px;font-size:10.7px;color:#b9b9b9;left:135px;letter-spacing:-0.13px;">Stock</span>
<svg class="b" style="left:215px;top:110px;" width="12" height="8" viewBox="0 0 12 8"><path d="M0 0.6H8" stroke="#dcdcdc" stroke-width="1.1"/><path d="M0 2.6H8" stroke="#dcdcdc" stroke-width="1.1"/><path d="M0 4.6H8" stroke="#dcdcdc" stroke-width="1.1"/><path d="M0 6.6H8" stroke="#dcdcdc" stroke-width="1.1"/><path d="M8.7 6H12L10.35 8Z" fill="#dcdcdc"/></svg>
<div class="b" style="left:38px;top:125.5px;width:193px;height:40.5px;background:#3b3b3b;"></div>
<svg class="b" style="left:42.5px;top:132.5px;" width="5.5" height="8" viewBox="0 0 5.5 8"><path d="M0.3 0L5.2 4L0.3 8Z" fill="#707070"/></svg>
<svg class="b" style="left:43px;top:153.3px;" width="6" height="6" viewBox="0 0 6 6"><path d="M6 0V6H0Z" fill="#707070"/></svg>
<span class="t" id="t37" style="top:130.31px;font-size:11.8px;color:#f0f0f0;left:57px;letter-spacing:-0.27px;">Master Pages</span>
<span class="t" id="t38" style="top:150.01px;font-size:11.8px;color:#f0f0f0;left:57px;letter-spacing:-0.61px;">Pages</span>
<svg class="b" style="left:177px;top:131px;" width="10" height="12" viewBox="0 0 10 12"><rect x="0.6" y="0.6" width="8.8" height="10.8" rx="0.8" fill="none" stroke="#d2d2d2" stroke-width="1.2"/><rect x="1.9" y="1.9" width="6.2" height="1.9" fill="#f4f4f4"/><path d="M1.9 5.6H8.1M1.9 7.5H8.1M1.9 9.5H8.1" stroke="#9a9a9a" stroke-width="1"/></svg>
<svg class="b" style="left:197.3px;top:129px;" width="12" height="14" viewBox="0 0 12 14"><path d="M2.8 2.6V0.5H11.4V11.2H9.6" fill="none" stroke="#6f6f6f" stroke-width="1"/><rect x="0.5" y="2.6" width="9.1" height="10.9" fill="#3b3b3b" stroke="#7a7a7a" stroke-width="1"/><rect x="2" y="4.2" width="6" height="1.6" fill="#8a8a8a"/><path d="M2 7.4H8M2 9.3H8M2 11.3H8" stroke="#6d6d6d" stroke-width="0.9"/></svg>
<svg class="b" style="left:217px;top:130px;" width="8.2" height="13.2" viewBox="0 0 8.2 13.2"><path d="M0.2 2.9Q4.1 -0.9 8 2.9Z" fill="#808080"/><path d="M0.4 3.5H7.8L7.2 13H1Z" fill="#7a7a7a"/><path d="M2.6 4.6V12M4.1 4.6V12M5.6 4.6V12" stroke="#686868" stroke-width="0.7"/></svg>
<svg class="b" style="left:150px;top:150.5px;" width="14.5" height="12" viewBox="0 0 14.5 12"><path d="M0 1.6H14.5" stroke="#b5b5b5" stroke-width="0.8"/><path d="M0 4.3H2.2M0 6.7H2.2M0 9.1H2.2M8.2 4.3H14.5M8.2 6.7H14.5M8.2 9.1H14.5" stroke="#8f8f8f" stroke-width="1.1"/><path d="M2.9 1.4H7.2V11.2L5.05 9.6L2.9 11.2Z" fill="#f2f2f2"/></svg>
<svg class="b" style="left:177px;top:150px;" width="10" height="12" viewBox="0 0 10 12"><rect x="0.6" y="0.6" width="8.8" height="10.8" rx="0.8" fill="none" stroke="#d2d2d2" stroke-width="1.2"/></svg>
<svg class="b" style="left:197.3px;top:148.2px;" width="12" height="14" viewBox="0 0 12 14"><path d="M2.8 2.6V0.5H11.4V11.2H9.6" fill="none" stroke="#6f6f6f" stroke-width="1"/><rect x="0.5" y="2.6" width="9.1" height="10.9" fill="#3b3b3b" stroke="#7a7a7a" stroke-width="1"/></svg>
<svg class="b" style="left:217px;top:149.4px;" width="8.2" height="13.2" viewBox="0 0 8.2 13.2"><path d="M0.2 2.9Q4.1 -0.9 8 2.9Z" fill="#808080"/><path d="M0.4 3.5H7.8L7.2 13H1Z" fill="#7a7a7a"/><path d="M2.6 4.6V12M4.1 4.6V12M5.6 4.6V12" stroke="#686868" stroke-width="0.7"/></svg>
<div class="b" style="left:132.4px;top:173px;width:96.6px;height:134px;background:#808080;"></div>
<div class="b" style="left:136.6px;top:176.8px;width:88.8px;height:126.5px;background:#ffffff;"></div>
<div class="b" style="left:147px;top:187.7px;width:21px;height:1px;background:repeating-linear-gradient(90deg,#666 0 2px,#aaa 2px 3px);"></div>
<div class="b" style="left:147px;top:196.4px;width:36px;height:1px;background:repeating-linear-gradient(90deg,#555 0 2px,#999 2px 3px);"></div>
<span class="t" id="t39" style="top:310.61px;font-size:11.8px;color:#f0f0f0;left:117.8px;letter-spacing:-0.38px;">Page 1</span>
<div class="b" style="left:233.7px;top:103.5px;width:1000.5px;height:21.5px;background:#404040;"></div>
<span class="t" id="t40" style="top:110.51px;font-size:10.5px;color:#f2f2f2;left:242.3px;letter-spacing:0.16px;">&lt;Untitled&gt; [Modified] (71.8%) [Trial]</span>
<svg class="b" style="left:1218.5px;top:110.7px;" width="7.5" height="7.5" viewBox="0 0 7.5 7.5"><path d="M0.6 0.6L6.9 6.9M6.9 0.6L0.6 6.9" stroke="#f0f0f0" stroke-width="1.4"/></svg>
<div class="b" style="left:233.7px;top:125px;width:984.3px;height:638px;background:#222222;"></div>
<div class="b" style="left:381px;top:125px;width:1px;height:638px;background:#50508e;"></div>
<div class="b" style="left:1015px;top:125px;width:2px;height:638px;background:#414178;"></div>
<div class="b" style="left:391.4px;top:134px;width:614.6px;height:629px;background:#ffffff;"></div>
<div class="b" style="left:464.6px;top:204.9px;width:149.5px;height:15.9px;background:#abc9f1;"></div>
<div class="b" style="left:464.6px;top:265px;width:252px;height:15.8px;background:#abc9f1;"></div>
<div class="b" style="left:465px;top:234.6px;width:1.8px;height:15.4px;background:#b6d1f3;"></div>
<div class="b" style="left:464px;top:206px;width:469px;height:1px;background:#4a8fe6;"></div>
<div class="b" style="left:464px;top:207px;width:469px;height:1px;background:rgba(74,143,230,0.55);"></div>
<div class="b" style="left:464px;top:206px;width:2px;height:365px;background:#6aa4ec;"></div>
<div class="b" style="left:932px;top:206px;width:1px;height:365px;background:#4a8fe6;"></div>
<div class="b" style="left:931px;top:206px;width:1px;height:365px;background:rgba(74,143,230,0.3);"></div>
<div class="b" style="left:464px;top:569px;width:469px;height:1px;background:rgba(74,143,230,0.45);"></div>
<div class="b" style="left:464px;top:570px;width:469px;height:1px;background:#4a8fe6;"></div>
<div class="b" style="left:464px;top:571px;width:2px;height:192px;background:#97c9f5;"></div>
<div class="b" style="left:932px;top:571px;width:1px;height:192px;background:#7dbcf3;"></div>
<div class="b" style="left:931px;top:571px;width:1px;height:192px;background:rgba(125,188,243,0.3);"></div>
<span class="t" id="t41" style="top:206.5px;font-size:13px;color:#2a4468;left:465.6px;transform-origin:0 0;transform:scaleX(1.126);"><span style="text-decoration:underline wavy #d0243c;text-decoration-thickness:1px;text-underline-offset:-0.5px;text-decoration-skip-ink:none;">Hello</span> <span style="text-decoration:underline wavy #d0243c;text-decoration-thickness:1px;text-underline-offset:-0.5px;text-decoration-skip-ink:none;">my</span> <span style="text-decoration:underline wavy #d0243c;text-decoration-thickness:1px;text-underline-offset:-0.5px;text-decoration-skip-ink:none;">name</span> <span style="text-decoration:underline wavy #d0243c;text-decoration-thickness:1px;text-underline-offset:-0.5px;text-decoration-skip-ink:none;">is</span> xxxx</span>
<span class="t" id="t42" style="top:266.6px;font-size:13px;color:#2a4468;left:465.6px;transform-origin:0 0;transform:scaleX(1.126);"><span style="text-decoration:underline wavy #d0243c;text-decoration-thickness:1px;text-underline-offset:-0.5px;text-decoration-skip-ink:none;">Halo</span> <span style="text-decoration:underline wavy #d0243c;text-decoration-thickness:1px;text-underline-offset:-0.5px;text-decoration-skip-ink:none;">nama</span> <span style="text-decoration:underline wavy #d0243c;text-decoration-thickness:1px;text-underline-offset:-0.5px;text-decoration-skip-ink:none;">saya</span> <span style="text-decoration:underline wavy #d0243c;text-decoration-thickness:1px;text-underline-offset:-0.5px;text-decoration-skip-ink:none;">xxxx</span> <span style="text-decoration:underline wavy #d0243c;text-decoration-thickness:1px;text-underline-offset:-0.5px;text-decoration-skip-ink:none;">siapa</span> <span style="text-decoration:underline wavy #d0243c;text-decoration-thickness:1px;text-underline-offset:-0.5px;text-decoration-skip-ink:none;">namamu?</span></span>
<div class="b" style="left:1218px;top:125px;width:16.8px;height:638px;background:#3c3c3c;"></div>
<svg class="b" style="left:1223.3px;top:132px;" width="7" height="6.2" viewBox="0 0 7 6.2"><path d="M3.5 0L7 6.2H0Z" fill="#7c7c7c"/></svg>
<svg class="b" style="left:1223.3px;top:752px;" width="7" height="6.2" viewBox="0 0 7 6.2"><path d="M3.5 6.2L7 0H0Z" fill="#7c7c7c"/></svg>
<div class="b" style="left:1223.6px;top:320px;width:6.8px;height:156.3px;background:#808080;border-radius:3.4px;"></div>
<div class="b" style="left:233.7px;top:763px;width:1001.1px;height:18px;background:#3c3c3c;"></div>
<svg class="b" style="left:238.7px;top:768.3px;" width="6.4" height="6.6" viewBox="0 0 6.4 6.6"><path d="M0 3.3L6.4 0V6.6Z" fill="#7c7c7c"/></svg>
<svg class="b" style="left:1206.3px;top:769px;" width="6.4" height="6.6" viewBox="0 0 6.4 6.6"><path d="M6.4 3.3L0 0V6.6Z" fill="#7c7c7c"/></svg>
<div class="b" style="left:588.8px;top:768.8px;width:304.3px;height:7.2px;background:#808080;border-radius:3.6px;"></div>
<div class="b" style="left:1237px;top:103px;width:263px;height:678px;background:#404040;"></div>
<div class="b" style="left:1237px;top:103px;width:263px;height:22.5px;background:#252525;"></div>
<div class="b" style="left:1243.5px;top:110px;width:1px;height:7.5px;background:#5a5a5a;"></div>
<div class="b" style="left:1254.2px;top:104px;width:35.3px;height:21.5px;background:#3f3f3f;"></div>
<span class="t" id="t43" style="top:108.34px;font-size:10.7px;color:#f4f4f4;left:1258.3px;letter-spacing:0.21px;">Color</span>
<span class="t" id="t44" style="top:108.34px;font-size:10.7px;color:#b9b9b9;left:1293.5px;letter-spacing:-0.28px;">Swatches</span>
<span class="t" id="t45" style="top:108.34px;font-size:10.7px;color:#b9b9b9;left:1347px;letter-spacing:-0.08px;">Stroke</span>
<svg class="b" style="left:1484.7px;top:110px;" width="12" height="8" viewBox="0 0 12 8"><path d="M0 0.6H8" stroke="#dcdcdc" stroke-width="1.1"/><path d="M0 2.6H8" stroke="#dcdcdc" stroke-width="1.1"/><path d="M0 4.6H8" stroke="#dcdcdc" stroke-width="1.1"/><path d="M0 6.6H8" stroke="#dcdcdc" stroke-width="1.1"/><path d="M8.7 6H12L10.35 8Z" fill="#dcdcdc"/></svg>
<svg class="b" style="left:1251.1px;top:141.3px;" width="26" height="26" viewBox="0 0 26 26"><circle cx="13" cy="13" r="11.7" fill="none" stroke="#494949" stroke-width="1"/><circle cx="13" cy="13" r="6.5" fill="none" stroke="#505050" stroke-width="1.6"/><circle cx="13" cy="13" r="9.3" fill="none" stroke="#fbfbfb" stroke-width="3.7"/><circle cx="13" cy="13" r="9.3" fill="none" stroke="#ee3a30" stroke-width="3.7" stroke-dasharray="2.6 26.62" stroke-dashoffset="-20.1"/></svg>
<svg class="b" style="left:1263.3px;top:153.7px;" width="26" height="26" viewBox="0 0 26 26"><circle cx="13" cy="13" r="12" fill="#231f20" stroke="#464646" stroke-width="1.1"/></svg>
<svg class="b" style="left:1252.2px;top:165.8px;" width="13" height="13" viewBox="0 0 13 13"><circle cx="6.5" cy="6.5" r="5.7" fill="#fdfdfd" stroke="#1c1c1c" stroke-width="0.8"/><path d="M2.6 10.4L10.4 2.6" stroke="#f0362e" stroke-width="1.5"/></svg>
<svg class="b" style="left:1276px;top:142px;" width="11.5" height="12" viewBox="0 0 11.5 12"><path d="M1.5 4C4 0.8 8.8 2 9.6 7.5" fill="none" stroke="#d2d2d2" stroke-width="1.1"/><path d="M0.3 1.6L1 5L4.2 3.9Z M7.6 7.4L11.3 6.8L9.9 10.3Z" fill="#d2d2d2"/></svg>
<svg class="b" style="left:1297px;top:140px;" width="18" height="18" viewBox="0 0 18 18"><defs><linearGradient id="dpg" x1="0" y1="0" x2="1" y2="0"><stop offset="0" stop-color="#e2ad48"/><stop offset="1" stop-color="#a87624"/></linearGradient><linearGradient id="dpb" x1="0" y1="0" x2="1" y2="0"><stop offset="0" stop-color="#d8d8d8"/><stop offset="1" stop-color="#8c8c8c"/></linearGradient></defs><g transform="rotate(45 9 9)"><ellipse cx="9" cy="1.2" rx="3.2" ry="3.6" fill="url(#dpg)"/><rect x="5.4" y="3.8" width="7.2" height="2.2" rx="0.8" fill="url(#dpg)"/><path d="M7.2 6H10.8V13.6L9 19.8L7.2 13.6Z" fill="url(#dpb)"/></g></svg>
<svg class="b" style="left:1316.5px;top:140.7px;" width="15" height="15" viewBox="0 0 15 15"><circle cx="7.5" cy="7.5" r="6.8" fill="#ed1c24" stroke="#4d4d4d" stroke-width="0.8"/></svg>
<div class="b" style="left:1391.2px;top:165.2px;width:17.3px;height:16.5px;background:#2b2b2b;"></div>
<svg class="b" style="left:1396.3px;top:168.2px;" width="7" height="9.5" viewBox="0 0 7 9.5"><path d="M1.6 4.4V2.8A1.9 1.9 0 0 1 5.4 2.8V4.4" fill="none" stroke="#bdbdbd" stroke-width="1.1"/><rect x="0.2" y="4.2" width="6.6" height="5" fill="#bdbdbd"/></svg>
<div class="b" style="left:1412.5px;top:165.5px;width:78px;height:16px;background:linear-gradient(#393939,#353535);border-radius:3px;box-shadow:inset 0 0 0 1px #2b2b2b;"></div>
<svg class="b" style="left:1479.8px;top:172.45px;" width="5.8" height="3.3" viewBox="0 0 5.8 3.3"><path d="M0 0H5.8 L2.9 3.3 Z" fill="#e8e8e8"/></svg>
<span class="t" id="t46" style="top:169.34px;font-size:10px;color:#ececec;left:1417px;letter-spacing:-0.92px;">RGB</span>
<span class="t" id="t47" style="top:191.1px;font-size:9.8px;color:#e0e0e0;left:1250.2px;letter-spacing:-0.51px;">R:</span>
<div class="b" style="left:1263.3px;top:191.8px;width:183.5px;height:8px;background:linear-gradient(90deg,#0b2424,#3a2826 18%,#8a3833 55%,#d53a35 88%,#e63232);border-radius:4px;box-shadow:0 0 0 1px #383838;"></div>
<svg class="b" style="left:1285.8px;top:189.6px;" width="12.4" height="12.4" viewBox="0 0 12.4 12.4"><circle cx="6.2" cy="6.2" r="5.1" fill="#2b2826" stroke="#f2f2f2" stroke-width="1.3"/></svg>
<div class="b" style="left:1452.2px;top:186.6px;width:38.4px;height:18px;background:#383838;border-radius:3px;box-shadow:inset 0 0 0 1px #2e2e2e;"></div>
<span class="t" id="t48" style="top:191.91px;font-size:10.5px;color:#ececec;left:1457.3px;letter-spacing:-0.04px;">35</span>
<span class="t" id="t49" style="top:214.7px;font-size:9.8px;color:#e0e0e0;left:1250.2px;letter-spacing:-0.77px;">G:</span>
<div class="b" style="left:1263.3px;top:215.4px;width:183.5px;height:8px;background:linear-gradient(90deg,#2b0e2b,#2b2627 16%,#3f6a33 55%,#62b340 90%,#6cc644);border-radius:4px;box-shadow:0 0 0 1px #383838;"></div>
<svg class="b" style="left:1283.5px;top:213.2px;" width="12.4" height="12.4" viewBox="0 0 12.4 12.4"><circle cx="6.2" cy="6.2" r="5.1" fill="#2b2826" stroke="#f2f2f2" stroke-width="1.3"/></svg>
<div class="b" style="left:1452.2px;top:210px;width:38.4px;height:18px;background:#383838;border-radius:3px;box-shadow:inset 0 0 0 1px #2e2e2e;"></div>
<span class="t" id="t50" style="top:215.31px;font-size:10.5px;color:#ececec;left:1457.3px;letter-spacing:-0.04px;">31</span>
<span class="t" id="t51" style="top:237.9px;font-size:9.8px;color:#e0e0e0;left:1250.2px;letter-spacing:-0.23px;">B:</span>
<div class="b" style="left:1263.3px;top:238.6px;width:183.5px;height:8px;background:linear-gradient(90deg,#27240c,#2a2726 16%,#39406e 55%,#4356aa 90%,#465cb8);border-radius:4px;box-shadow:0 0 0 1px #383838;"></div>
<svg class="b" style="left:1283.5px;top:236.4px;" width="12.4" height="12.4" viewBox="0 0 12.4 12.4"><circle cx="6.2" cy="6.2" r="5.1" fill="#2b2826" stroke="#f2f2f2" stroke-width="1.3"/></svg>
<div class="b" style="left:1452.2px;top:233.5px;width:38.4px;height:18px;background:#383838;border-radius:3px;box-shadow:inset 0 0 0 1px #2e2e2e;"></div>
<span class="t" id="t52" style="top:238.81px;font-size:10.5px;color:#ececec;left:1457.3px;letter-spacing:-0.04px;">32</span>
<div class="b" style="left:1249.8px;top:259.6px;width:241.2px;height:52.6px;background:linear-gradient(180deg,#fff 0%,rgba(255,255,255,0.55) 25%,rgba(255,255,255,0) 52%,rgba(0,0,0,0) 52%,rgba(0,0,0,0.5) 76%,#000 99%),linear-gradient(90deg,#ed1c24 0%,#f7941d 8%,#fff200 16%,#a6ce39 24%,#5cb947 33%,#19a84f 41%,#00a99d 47.5%,#00aeef 53%,#0072bc 59%,#2e3e9a 67%,#5c3a96 77%,#9a3a96 84%,#ec008c 91%,#ed1c24 99%);box-shadow:0 0 0 1px #2c2c2c;"></div>
<span class="t" id="t53" style="top:317.11px;font-size:10.5px;color:#e8e8e8;left:1249.8px;letter-spacing:-0.24px;">Opacity</span>
<svg class="b" style="left:1253.5px;top:331.7px;" width="16.5" height="16.5" viewBox="0 0 16.5 16.5"><circle cx="8.2" cy="8.2" r="7.5" fill="#231f20" stroke="#363636" stroke-width="0.8"/></svg>
<div class="b" style="left:1274.8px;top:336.6px;width:147px;height:7.8px;background:repeating-conic-gradient(#454545 0% 25%,#5e5e5e 0% 50%) 0 0/7.8px 7.8px;border-radius:3.9px;"></div>
<div class="b" style="left:1274.8px;top:336.6px;width:147px;height:7.8px;background:linear-gradient(90deg,rgba(255,255,255,1) 2%,rgba(255,255,255,0.68) 25%,rgba(255,255,255,0.4) 50%,rgba(255,255,255,0.17) 75%,rgba(255,255,255,0.02) 97%);border-radius:3.9px;"></div>
<svg class="b" style="left:1411.7px;top:334.2px;" width="12.4" height="12.4" viewBox="0 0 12.4 12.4"><circle cx="6.2" cy="6.2" r="5.1" fill="#3a3a3a" stroke="#f2f2f2" stroke-width="1.3"/></svg>
<div class="b" style="left:1428.6px;top:330px;width:58px;height:18px;background:#2e2e2e;border-radius:3px;box-shadow:inset 0 0 0 1px #2b2b2b;"></div>
<div class="b" style="left:1472px;top:331px;width:13.6px;height:16px;background:#3d3d3d;border-radius:0 2px 2px 0;"></div>
<svg class="b" style="left:1476.1px;top:337.95px;" width="5.8" height="3.3" viewBox="0 0 5.8 3.3"><path d="M0 0H5.8 L2.9 3.3 Z" fill="#e8e8e8"/></svg>
<span class="t" id="t54" style="top:334.51px;font-size:10.5px;color:#ececec;left:1435.5px;letter-spacing:-0.34px;">100 %</span>
<div class="b" style="left:1237px;top:357.2px;width:263px;height:22.5px;background:#252525;"></div>
<div class="b" style="left:1243.5px;top:364.2px;width:1px;height:7.5px;background:#5a5a5a;"></div>
<div class="b" style="left:1293.4px;top:358.2px;width:54.6px;height:21.5px;background:#3f3f3f;"></div>
<span class="t" id="t55" style="top:362.94px;font-size:10.7px;color:#b9b9b9;left:1258.4px;letter-spacing:-0.3px;">Layers</span>
<span class="t" id="t56" style="top:362.94px;font-size:10.7px;color:#f4f4f4;left:1297.5px;letter-spacing:-0.07px;">Character</span>
<span class="t" id="t57" style="top:362.94px;font-size:10.7px;color:#b9b9b9;left:1352.5px;letter-spacing:-0.15px;">Paragraph</span>
<span class="t" id="t58" style="top:362.94px;font-size:10.7px;color:#b9b9b9;left:1410.5px;letter-spacing:-0.25px;">Text Styles</span>
<svg class="b" style="left:1484.7px;top:364px;" width="12" height="8" viewBox="0 0 12 8"><path d="M0 0.6H8" stroke="#dcdcdc" stroke-width="1.1"/><path d="M0 2.6H8" stroke="#dcdcdc" stroke-width="1.1"/><path d="M0 4.6H8" stroke="#dcdcdc" stroke-width="1.1"/><path d="M0 6.6H8" stroke="#dcdcdc" stroke-width="1.1"/><path d="M8.7 6H12L10.35 8Z" fill="#dcdcdc"/></svg>
<div class="b" style="left:1250.3px;top:385.5px;width:77.5px;height:17px;background:linear-gradient(#393939,#353535);border-radius:3px;box-shadow:inset 0 0 0 1px #2b2b2b;"></div>
<svg class="b" style="left:1317.1px;top:392.95px;" width="5.8" height="3.3" viewBox="0 0 5.8 3.3"><path d="M0 0H5.8 L2.9 3.3 Z" fill="#e8e8e8"/></svg>
<span class="t" id="t59" style="top:390.31px;font-size:10.5px;color:#ececec;left:1255px;letter-spacing:0.31px;">All</span>
<div class="b" style="left:1333.2px;top:385.5px;width:154.5px;height:17px;background:#2e2e2e;border-radius:3px;box-shadow:inset 0 0 0 1px #2b2b2b;"></div>
<div class="b" style="left:1472.5px;top:386.5px;width:14.2px;height:15px;background:#3d3d3d;border-radius:0 2px 2px 0;"></div>
<svg class="b" style="left:1476.9px;top:392.95px;" width="5.8" height="3.3" viewBox="0 0 5.8 3.3"><path d="M0 0H5.8 L2.9 3.3 Z" fill="#e8e8e8"/></svg>
<span class="t" id="t60" style="top:390.31px;font-size:10.5px;color:#ececec;left:1338.2px;letter-spacing:0.12px;">Arial</span>
<div class="b" style="left:1250.3px;top:409.3px;width:77.5px;height:18px;background:#2e2e2e;border-radius:3px;box-shadow:inset 0 0 0 1px #2b2b2b;"></div>
<div class="b" style="left:1313.2px;top:410.3px;width:13.6px;height:16px;background:#3d3d3d;border-radius:0 2px 2px 0;"></div>
<svg class="b" style="left:1317.3px;top:417.25px;" width="5.8" height="3.3" viewBox="0 0 5.8 3.3"><path d="M0 0H5.8 L2.9 3.3 Z" fill="#e8e8e8"/></svg>
<span class="t" id="t61" style="top:414.71px;font-size:10.5px;color:#ececec;left:1256.3px;letter-spacing:0.25px;">12 pt</span>
<div class="b" style="left:1333.2px;top:409.3px;width:102px;height:18px;background:linear-gradient(#393939,#353535);border-radius:3px;box-shadow:inset 0 0 0 1px #2b2b2b;"></div>
<svg class="b" style="left:1424.5px;top:417.25px;" width="5.8" height="3.3" viewBox="0 0 5.8 3.3"><path d="M0 0H5.8 L2.9 3.3 Z" fill="#e8e8e8"/></svg>
<span class="t" id="t62" style="top:414.21px;font-size:10.5px;color:#ececec;left:1338.4px;letter-spacing:-0.05px;">Regular</span>
<div class="b" style="left:1441px;top:410.4px;width:21.8px;height:17.8px;background:#231f20;border-radius:3px;box-shadow:0 0 0 1px #333;"></div>
<div class="b" style="left:1467.6px;top:410.4px;width:19.6px;height:17.8px;background:#ffffff;border-radius:2.5px;"></div>
<svg class="b" style="left:1467.6px;top:410.4px;" width="19.6" height="17.8" viewBox="0 0 19.6 17.8"><path d="M1 16.8L18.6 1" stroke="#e8392f" stroke-width="1.3"/></svg>
<div class="b" style="left:1250.3px;top:434.2px;width:236.8px;height:17.2px;background:linear-gradient(#393939,#353535);border-radius:3px;box-shadow:inset 0 0 0 1px #2b2b2b;"></div>
<svg class="b" style="left:1476.4px;top:441.75px;" width="5.8" height="3.3" viewBox="0 0 5.8 3.3"><path d="M0 0H5.8 L2.9 3.3 Z" fill="#e8e8e8"/></svg>
<span class="t" id="t63" style="top:438.51px;font-size:10.5px;color:#ececec;left:1254.8px;letter-spacing:0.21px;">[No Style]</span>
<div class="b" style="left:1250.3px;top:466.2px;width:212.48px;height:19.3px;background:#454545;border-radius:3px;box-shadow:0 0 0 1px #383838;"></div>
<div class="b" style="left:1276.36px;top:466.2px;width:1px;height:19.3px;background:#393939;"></div>
<div class="b" style="left:1302.92px;top:466.2px;width:1px;height:19.3px;background:#393939;"></div>
<div class="b" style="left:1329.48px;top:466.2px;width:1px;height:19.3px;background:#393939;"></div>
<div class="b" style="left:1356.04px;top:466.2px;width:1px;height:19.3px;background:#393939;"></div>
<div class="b" style="left:1382.6px;top:466.2px;width:1px;height:19.3px;background:#393939;"></div>
<div class="b" style="left:1409.16px;top:466.2px;width:1px;height:19.3px;background:#393939;"></div>
<div class="b" style="left:1435.72px;top:466.2px;width:1px;height:19.3px;background:#393939;"></div>
<div class="b" style="left:1250.3px;top:466.2px;width:26.6px;height:19.3px;background:#262626;border-radius:3px 0 0 3px;"></div>
<div class="b" style="left:1277.36px;top:466.2px;width:26px;height:19.3px;background:#444444;"></div>
<span class="t" id="t64" style="top:468.8px;font-size:15px;color:#f4f4f4;left:1258.3px;font-family:'Liberation Serif',serif;will-change:transform;">fi</span>
<span class="t" id="t65" style="top:468.3px;font-size:15px;color:#5f5f5f;left:1283.5px;font-family:'Liberation Serif',serif;will-change:transform;font-style:italic;">a</span>
<span class="t" id="t66" style="top:470.42px;font-size:12.5px;color:#dcdcdc;left:1311.2px;font-family:'Liberation Serif',serif;will-change:transform;">1<span style="font-size:7.5px;vertical-align:4px">st</span></span>
<span class="t" id="t67" style="top:469.7px;font-size:13px;color:#dcdcdc;left:1337.5px;font-family:'Liberation Serif',serif;will-change:transform;">½</span>
<span class="t" id="t68" style="top:470.42px;font-size:12.5px;color:#dcdcdc;left:1364.3px;">S<span style="font-size:8px;vertical-align:5px">•</span></span>
<span class="t" id="t69" style="top:470.42px;font-size:12.5px;color:#dcdcdc;left:1390.8px;">S<span style="font-size:8px;vertical-align:-1.5px">•</span></span>
<span class="t" id="t70" style="top:471.02px;font-size:11.2px;color:#dcdcdc;left:1415.8px;font-family:'Liberation Serif',serif;will-change:transform;">TT</span>
<span class="t" id="t71" style="top:471.02px;font-size:11.2px;color:#dcdcdc;left:1442.8px;font-family:'Liberation Serif',serif;will-change:transform;">T<span style="font-size:8.5px">T</span></span>
<div class="b" style="left:1250.3px;top:498.2px;width:79.68px;height:18.3px;background:#454545;border-radius:3px;box-shadow:0 0 0 1px #383838;"></div>
<div class="b" style="left:1250.3px;top:498.2px;width:26.56px;height:18.3px;background:#404040;border-radius:3px 0 0 3px;"></div>
<div class="b" style="left:1303.42px;top:498.2px;width:26.56px;height:18.3px;background:#404040;border-radius:0 3px 3px 0;"></div>
<div class="b" style="left:1276.36px;top:498.2px;width:1px;height:18.3px;background:#393939;"></div>
<div class="b" style="left:1302.92px;top:498.2px;width:1px;height:18.3px;background:#393939;"></div>
<span class="t" id="t72" style="top:498.15px;font-size:14px;color:#585858;left:1256.5px;font-family:'Liberation Serif',serif;will-change:transform;">gg</span>
<svg class="b" style="left:1283.3px;top:500.5px;" width="13" height="13.5" viewBox="0 0 13 13.5"><rect x="2.6" y="2.6" width="9.8" height="10.3" fill="none" stroke="#a8a8a8" stroke-width="0.9"/><rect x="0.5" y="0.5" width="9.8" height="10.3" fill="#464646" stroke="#ececec" stroke-width="1"/></svg>
<span class="t" id="t73" style="top:501.41px;font-size:10.5px;color:#ececec;left:1285.8px;font-family:'Liberation Serif',serif;will-change:transform;">fi</span>
<span class="t" id="t74" style="top:499.23px;font-size:14.5px;color:#585858;left:1308px;font-family:'Liberation Serif',serif;will-change:transform;font-style:italic;">A</span>
<div class="b" style="left:1347.5px;top:495.8px;width:16.3px;height:23px;background:#414141;border-radius:3px;box-shadow:0 0 0 1px #343434;"></div>
<span class="t" id="t75" style="top:503.38px;font-size:9px;color:#ececec;left:1351.8px;font-weight:700;">...</span>
<div class="b" style="left:1483.4px;top:462px;width:16.6px;height:188px;background:#414141;"></div>
<svg class="b" style="left:1489px;top:468px;" width="7" height="6.2" viewBox="0 0 7 6.2"><path d="M3.5 0L7 6.2H0Z" fill="#7c7c7c"/></svg>
<svg class="b" style="left:1489px;top:644.3px;" width="7" height="6.2" viewBox="0 0 7 6.2"><path d="M3.5 6.2L7 0H0Z" fill="#7c7c7c"/></svg>
<div class="b" style="left:1489.6px;top:564.3px;width:6.2px;height:67.7px;background:#808080;border-radius:3.1px;"></div>
<div class="b" style="left:1237px;top:524px;width:246.4px;height:18px;background:#3a3a3a;"></div>
<svg class="b" style="left:1242.3px;top:529.3px;" width="6" height="6" viewBox="0 0 6 6"><path d="M6 0V6H0Z" fill="#707070"/></svg>
<span class="t" id="t76" style="top:526.31px;font-size:11.8px;color:#f0f0f0;left:1257.2px;letter-spacing:-0.17px;">Language</span>
<span class="t" id="t77" style="top:555.41px;font-size:10.5px;color:#ececec;right:146.4px;letter-spacing:0.04px;">Spelling:</span>
<div class="b" style="left:1357.7px;top:551.4px;width:120.2px;height:16.8px;background:linear-gradient(#393939,#353535);border-radius:3px;box-shadow:inset 0 0 0 1px #2b2b2b;"></div>
<svg class="b" style="left:1467.2px;top:558.75px;" width="5.8" height="3.3" viewBox="0 0 5.8 3.3"><path d="M0 0H5.8 L2.9 3.3 Z" fill="#e8e8e8"/></svg>
<span class="t" id="t78" style="top:555.61px;font-size:10.5px;color:#ececec;left:1362px;letter-spacing:0.03px;max-width:101px;overflow:hidden;">Indonesian (Indonesia</span>
<span class="t" id="t79" style="top:581.01px;font-size:10.5px;color:#ececec;right:146.4px;letter-spacing:0.12px;">Hyphenation language:</span>
<div class="b" style="left:1357.7px;top:576.7px;width:120.2px;height:16.8px;background:linear-gradient(#393939,#353535);border-radius:3px;box-shadow:inset 0 0 0 1px #2b2b2b;"></div>
<svg class="b" style="left:1467.2px;top:584.05px;" width="5.8" height="3.3" viewBox="0 0 5.8 3.3"><path d="M0 0H5.8 L2.9 3.3 Z" fill="#e8e8e8"/></svg>
<span class="t" id="t80" style="top:580.91px;font-size:10.5px;color:#ececec;left:1362px;letter-spacing:-0px;max-width:101px;overflow:hidden;">Auto</span>
<span class="t" id="t81" style="top:607.11px;font-size:10.5px;color:#ececec;right:146.4px;letter-spacing:0.07px;">Typography script:</span>
<div class="b" style="left:1357.7px;top:602.8px;width:120.2px;height:16.8px;background:linear-gradient(#393939,#353535);border-radius:3px;box-shadow:inset 0 0 0 1px #2b2b2b;"></div>
<svg class="b" style="left:1467.2px;top:610.15px;" width="5.8" height="3.3" viewBox="0 0 5.8 3.3"><path d="M0 0H5.8 L2.9 3.3 Z" fill="#e8e8e8"/></svg>
<span class="t" id="t82" style="top:607.01px;font-size:10.5px;color:#ececec;left:1362px;letter-spacing:-0px;max-width:101px;overflow:hidden;">Auto</span>
<span class="t" id="t83" style="top:632.71px;font-size:10.5px;color:#ececec;right:146.4px;letter-spacing:0.11px;">Typography language:</span>
<div class="b" style="left:1357.7px;top:628.4px;width:120.2px;height:16.8px;background:linear-gradient(#393939,#353535);border-radius:3px;box-shadow:inset 0 0 0 1px #2b2b2b;"></div>
<svg class="b" style="left:1467.2px;top:635.75px;" width="5.8" height="3.3" viewBox="0 0 5.8 3.3"><path d="M0 0H5.8 L2.9 3.3 Z" fill="#e8e8e8"/></svg>
<span class="t" id="t84" style="top:632.61px;font-size:10.5px;color:#ececec;left:1362px;letter-spacing:-0px;max-width:101px;overflow:hidden;">Auto</span>
<div class="b" style="left:1237px;top:656.2px;width:263px;height:22.2px;background:#252525;"></div>
<div class="b" style="left:1243.5px;top:663.2px;width:1px;height:7.5px;background:#5a5a5a;"></div>
<div class="b" style="left:1254.5px;top:657.2px;width:55.8px;height:21.2px;background:#3f3f3f;"></div>
<span class="t" id="t85" style="top:662.44px;font-size:10.7px;color:#f4f4f4;left:1258.8px;letter-spacing:-0.13px;">Transform</span>
<span class="t" id="t86" style="top:662.44px;font-size:10.7px;color:#b9b9b9;left:1314.6px;letter-spacing:0.19px;">History</span>
<span class="t" id="t87" style="top:662.44px;font-size:10.7px;color:#b9b9b9;left:1357.7px;letter-spacing:0.15px;">Navigator</span>
<div class="b" style="left:1259.8px;top:701.8px;width:30.8px;height:30.2px;background:#6f6f6f;"></div>
<div class="b" style="left:1272.5px;top:699.8px;width:5.8px;height:5.8px;background:#a9a9a9;"></div>
<div class="b" style="left:1287.4px;top:699.8px;width:5.8px;height:5.8px;background:#a9a9a9;"></div>
<div class="b" style="left:1257.6px;top:714.4px;width:5.8px;height:5.8px;background:#a9a9a9;"></div>
<div class="b" style="left:1272.5px;top:714.4px;width:5.8px;height:5.8px;background:#a9a9a9;"></div>
<div class="b" style="left:1287.4px;top:714.4px;width:5.8px;height:5.8px;background:#a9a9a9;"></div>
<div class="b" style="left:1257.6px;top:729px;width:5.8px;height:5.8px;background:#a9a9a9;"></div>
<div class="b" style="left:1272.5px;top:729px;width:5.8px;height:5.8px;background:#a9a9a9;"></div>
<div class="b" style="left:1287.4px;top:729px;width:5.8px;height:5.8px;background:#a9a9a9;"></div>
<div class="b" style="left:1256.4px;top:698.3px;width:8.4px;height:8.4px;background:#ffffff;"></div>
<span class="t" id="t88" style="top:697.01px;font-size:10.5px;color:#ececec;left:1313px;letter-spacing:-0.41px;">X:</span>
<div class="b" style="left:1326.3px;top:690.7px;width:62.2px;height:18.4px;background:#363636;border-radius:3px;box-shadow:inset 0 0 0 1px #2b2b2b;"></div>
<span class="t" id="t89" style="top:695.81px;font-size:10.5px;color:#ececec;left:1331.3px;letter-spacing:-0.1px;">21 mm</span>
<span class="t" id="t90" style="top:697.01px;font-size:10.5px;color:#ececec;left:1399.4px;letter-spacing:0.48px;">W:</span>
<div class="b" style="left:1416.5px;top:690.7px;width:63.2px;height:18.4px;background:#363636;border-radius:3px;box-shadow:inset 0 0 0 1px #2b2b2b;"></div>
<span class="t" id="t91" style="top:695.81px;font-size:10.5px;color:#ececec;left:1421.5px;letter-spacing:0.03px;">134 mm</span>
<span class="t" id="t92" style="top:720.51px;font-size:10.5px;color:#ececec;left:1313px;letter-spacing:-0.12px;">Y:</span>
<div class="b" style="left:1326.3px;top:714.4px;width:62.2px;height:18.4px;background:#363636;border-radius:3px;box-shadow:inset 0 0 0 1px #2b2b2b;"></div>
<span class="t" id="t93" style="top:719.51px;font-size:10.5px;color:#ececec;left:1331.3px;letter-spacing:-0.1px;">21 mm</span>
<span class="t" id="t94" style="top:720.51px;font-size:10.5px;color:#ececec;left:1402.6px;letter-spacing:0.05px;">H:</span>
<div class="b" style="left:1416.5px;top:714.4px;width:63.2px;height:18.4px;background:#363636;border-radius:3px;box-shadow:inset 0 0 0 1px #2b2b2b;"></div>
<span class="t" id="t95" style="top:719.51px;font-size:10.5px;color:#ececec;left:1421.5px;letter-spacing:0.03px;">104 mm</span>
<span class="t" id="t96" style="top:748.41px;font-size:10.5px;color:#ececec;left:1313px;letter-spacing:-0.55px;">R:</span>
<div class="b" style="left:1326.3px;top:743.2px;width:62.2px;height:19.2px;background:#363636;border-radius:3px;box-shadow:inset 0 0 0 1px #2b2b2b;"></div>
<span class="t" id="t97" style="top:748.71px;font-size:10.5px;color:#ececec;left:1331.3px;letter-spacing:0.21px;">0 °</span>
<svg class="b" style="left:1377.1px;top:751.45px;" width="5.8" height="3.3" viewBox="0 0 5.8 3.3"><path d="M0 0H5.8 L2.9 3.3 Z" fill="#e8e8e8"/></svg>
<span class="t" id="t98" style="top:748.41px;font-size:10.5px;color:#ececec;left:1404.6px;letter-spacing:-0.66px;">S:</span>
<div class="b" style="left:1416.5px;top:743.2px;width:63.2px;height:19.2px;background:#363636;border-radius:3px;box-shadow:inset 0 0 0 1px #2b2b2b;"></div>
<span class="t" id="t99" style="top:748.71px;font-size:10.5px;color:#ececec;left:1421.5px;letter-spacing:0.21px;">0 °</span>
<svg class="b" style="left:1468.3px;top:751.45px;" width="5.8" height="3.3" viewBox="0 0 5.8 3.3"><path d="M0 0H5.8 L2.9 3.3 Z" fill="#e8e8e8"/></svg>
<svg class="b" style="left:1486.3px;top:705.3px;" width="5" height="13" viewBox="0 0 5 13"><ellipse cx="2.5" cy="3" rx="1.7" ry="2.5" fill="none" stroke="#7a7a7a" stroke-width="1"/><ellipse cx="2.5" cy="10" rx="1.7" ry="2.5" fill="none" stroke="#7a7a7a" stroke-width="1"/><path d="M2.5 4V9" stroke="#7a7a7a" stroke-width="1"/></svg>
<div class="b" style="left:0px;top:781px;width:1500px;height:24.2px;background:#333333;"></div>
<svg class="b" style="left:6.7px;top:789px;" width="10.5" height="9.5" viewBox="0 0 10.5 9.5"><path d="M0.7 0V9.5" stroke="#8a8a8a" stroke-width="1.3"/><path d="M10.5 0V9.5L2.3 4.75Z" fill="#8a8a8a"/></svg>
<svg class="b" style="left:26.7px;top:789px;" width="8" height="9.5" viewBox="0 0 8 9.5"><path d="M8 0V9.5L0 4.75Z" fill="#8a8a8a"/></svg>
<span class="t" id="t100" style="top:788.99px;font-size:11px;color:#f0f0f0;left:64.7px;letter-spacing:-0.15px;">1 of 1</span>
<svg class="b" style="left:121px;top:788.7px;" width="9" height="10" viewBox="0 0 9 10"><path d="M0 0V10L9 5Z" fill="#f6f6f6"/></svg>
<svg class="b" style="left:139.3px;top:789px;" width="10.5" height="9.5" viewBox="0 0 10.5 9.5"><path d="M9.8 0V9.5" stroke="#8a8a8a" stroke-width="1.3"/><path d="M0 0V9.5L8.2 4.75Z" fill="#8a8a8a"/></svg>
<svg class="b" style="left:157.7px;top:787.4px;" width="12.8" height="13" viewBox="0 0 12.8 13"><path d="M10.6 2.6H12.2V12.4H3V11" fill="none" stroke="#8f8f8f" stroke-width="1"/><rect x="0.6" y="0.6" width="9.6" height="10.2" fill="#333" stroke="#e4e4e4" stroke-width="1.1"/><rect x="2.2" y="2.2" width="6.4" height="1.7" fill="#f0f0f0"/><path d="M2.2 5.6H8.6M2.2 7.4H8.6M2.2 9.1H8.6" stroke="#bdbdbd" stroke-width="0.8"/></svg>
<svg class="b" style="left:185.5px;top:787.5px;" width="13" height="12" viewBox="0 0 13 12"><path d="M2.3 10.2V5.8A4.2 5 0 0 1 10.7 5.8V10.2Z" fill="#f0d335"/><path d="M3.6 9V6A3 3.6 0 0 1 5.4 2.6" stroke="#f8e678" stroke-width="1" fill="none"/><rect x="0.4" y="10" width="12.2" height="1.5" fill="#a68f2a"/></svg>
<span class="t" id="t101" style="top:789.09px;font-size:11px;color:#ffffff;left:210.5px;font-weight:700;letter-spacing:0.51px;">Drag</span>
<span class="t" id="t102" style="top:789.09px;font-size:11px;color:#bdbdbd;left:240.5px;letter-spacing:0.23px;">to create Frame text.</span>
<span class="t" id="t103" style="top:789.09px;font-size:11px;color:#ffffff;left:349.7px;font-weight:700;letter-spacing:0.06px;">Click</span>
<span class="t" id="t104" style="top:789.09px;font-size:11px;color:#bdbdbd;left:379px;letter-spacing:0.32px;">an object to select it.</span>
<div class="b" style="left:0px;top:805.2px;width:1500px;height:38.8px;background:linear-gradient(90deg,#10131b 0%,#13161f 15%,#1a1d27 30%,#20222b 48%,#25222a 62%,#2b2426 71%,#271f22 76%,#191a23 84%,#13161f 92%,#11141c 100%);"></div>
<svg class="b" style="left:15.7px;top:816.7px;" width="16" height="16" viewBox="0 0 16 16"><path d="M0 2.3L6.6 1.4V7.6H0ZM7.6 1.25L16 0V7.6H7.6ZM0 8.5H6.6V14.7L0 13.8ZM7.6 8.5H16V16L7.6 14.85Z" fill="#ffffff"/></svg>
<svg class="b" style="left:62.3px;top:815px;" width="22" height="18.5" viewBox="0 0 22 18.5"><path d="M0.5 2.5C0.5 1.6 1 1 2 1H8L10 3H20C21 3 21.5 3.6 21.5 4.5V6H0.5Z" fill="#e9a52b"/><rect x="0.5" y="4.6" width="21" height="13.4" rx="1" fill="#fcd667"/><rect x="4.8" y="10" width="12.4" height="8" fill="#3b97e3"/><rect x="7" y="13.6" width="8" height="4.4" fill="#fcd667"/><path d="M0.5 7H21.5" stroke="#f0bc45" stroke-width="1"/></svg>
<div class="b" style="left:102.3px;top:841.2px;width:148.5px;height:2.8px;background:#8f959e;"></div>
<svg class="b" style="left:108.3px;top:813.2px;" width="23.5" height="23.5" viewBox="0 0 24 24"><defs><linearGradient id="eg1" x1="0.1" y1="0.1" x2="0.7" y2="1"><stop offset="0" stop-color="#2ea9e6"/><stop offset="1" stop-color="#0c59b0"/></linearGradient><linearGradient id="eg2" x1="0" y1="0.3" x2="1" y2="0.5"><stop offset="0" stop-color="#1b93dc"/><stop offset="0.55" stop-color="#32c48d"/><stop offset="1" stop-color="#74de4c"/></linearGradient><linearGradient id="eg3" x1="0" y1="0" x2="0.6" y2="1"><stop offset="0" stop-color="#1370c4"/><stop offset="1" stop-color="#0a3f86"/></linearGradient></defs><circle cx="12" cy="12" r="11.6" fill="url(#eg1)"/><path d="M12 0.4A11.6 11.6 0 0 1 23.6 12C23.6 15.2 21 17.2 18 17.2C15.2 17.2 14 15.8 14 14.6C14 13.4 15.6 13 15.6 11C15.6 8.4 13 6.6 9.6 6.6C5 6.6 1.5 9.6 0.5 13.2C0 6 5.5 0.4 12 0.4Z" fill="url(#eg2)"/><path d="M9.6 6.6C5.6 6.6 3 10 3 14C3 19.2 7 23.6 12.6 23.6C15.2 23.6 17.6 22.8 19.2 21.6C14 23 9 19.6 9 15C9 12 10.4 10 12 9.2C11.4 7.6 10.6 6.6 9.6 6.6Z" fill="url(#eg3)"/></svg>
<span class="t" id="t105" style="top:819.44px;font-size:12px;color:#ffffff;left:135px;letter-spacing:-0.23px;">Create New Topic - ...</span>
<div class="b" style="left:255.7px;top:805.2px;width:156px;height:38.8px;background:#494d55;"></div>
<div class="b" style="left:255.7px;top:841.2px;width:156px;height:2.8px;background:#9ba1a9;"></div>
<svg class="b" style="left:265.4px;top:812.6px;" width="23.6" height="23.6" viewBox="0 0 24 24"><defs><linearGradient id="pg3" x1="0" y1="0" x2="0.3" y2="1"><stop offset="0" stop-color="#ffa65c"/><stop offset="1" stop-color="#ff9748"/></linearGradient></defs><rect width="24" height="24" fill="url(#pg3)"/><path d="M0 0H10.4L0 16.2Z" fill="#d0264c"/><path d="M13 0L24 18.3M10.4 0L24 23M8.2 3.5L21 24M6.1 6.8L17.6 24M4 10L14.2 24M2.3 12.6L10.9 24" stroke="#cf2b48" stroke-width="1" fill="none" stroke-opacity="0"/><path d="M12.6 0L24 18.6M9.6 1.3L21.4 24M7.2 5L18 24M4.8 8.7L14.6 24M2.4 12.4L11.2 24" stroke="#cf2b48" stroke-width="1.05" fill="none"/></svg>
<span class="t" id="t106" style="top:819.44px;font-size:12px;color:#ffffff;left:292.3px;letter-spacing:-0.06px;">Affinity Publisher</span>
<svg class="b" style="left:1259.3px;top:820px;" width="13" height="8" viewBox="0 0 13 8"><path d="M0.7 7.3L6.5 1L12.3 7.3" fill="none" stroke="#f2f2f2" stroke-width="1.2"/></svg>
<svg class="b" style="left:1281.7px;top:820px;" width="16" height="9" viewBox="0 0 16 9"><rect x="0.6" y="0.6" width="13.2" height="7.6" rx="0.8" fill="none" stroke="#f2f2f2" stroke-width="1.1"/><rect x="2.2" y="2.2" width="8.3" height="4.4" fill="#f2f2f2"/><rect x="14.4" y="2.8" width="1.3" height="3.2" fill="#f2f2f2"/></svg>
<svg class="b" style="left:1304.3px;top:817.5px;" width="17" height="14" viewBox="0 0 17 14"><path d="M0.6 4.8H3L6.2 1.6V12.4L3 9.2H0.6Z" fill="none" stroke="#f2f2f2" stroke-width="1"/><path d="M8.2 5C9.3 6.2 9.3 7.8 8.2 9" fill="none" stroke="#f2f2f2" stroke-width="0.9"/><path d="M10.4 3C12.4 5.2 12.4 8.8 10.4 11M12.8 0.8C16 4.2 16 9.8 12.8 13.2" fill="none" stroke="#6f737c" stroke-width="0.9"/></svg>
<svg class="b" style="left:1330px;top:818.6px;transform:scaleX(-1) scaleX(-1);" width="14.5" height="12.5" viewBox="0 0 14.5 12.5"><path d="M0.6 12C0.6 5.6 5.8 0.6 12.2 0.6M3.8 12C3.8 7.4 7.6 3.8 12.2 3.8M7 12C7 9.2 9.4 7 12.2 7" fill="none" stroke="#f2f2f2" stroke-width="1"/><circle cx="11.2" cy="11" r="1.3" fill="#f2f2f2"/></svg>
<span class="t" id="t107" style="top:819.52px;font-size:11.2px;color:#ffffff;left:1353.8px;letter-spacing:-0.28px;">ENG</span>
<span class="t" id="t108" style="top:811.02px;font-size:11.2px;color:#ffffff;left:1391.5px;letter-spacing:0.44px;">11:11 AM</span>
<span class="t" id="t109" style="top:828.82px;font-size:11.2px;color:#ffffff;left:1393px;letter-spacing:0.38px;">1/8/2022</span>
<svg class="b" style="left:1460px;top:816.7px;" width="18" height="15.5" viewBox="0 0 18 15.5"><path d="M0.6 0.6H15.6V11.4H4.6L0.6 14.8Z" fill="#f4f4f4"/><path d="M3 3.4H13.4M3 5.9H13.4M3 8.4H13.4" stroke="#1a1e2a" stroke-width="0.9"/></svg>
<svg class="b" style="left:1467.5px;top:825px;" width="16" height="15" viewBox="0 0 16 15"><circle cx="8" cy="7.3" r="7" fill="#1a1c26" stroke="#9a9a9a" stroke-width="1"/></svg>
<span class="t" id="t110" style="top:827.74px;font-size:10px;color:#ffffff;left:1472.4px;font-weight:700;">2</span>
<div class="b" style="left:1494.8px;top:805.2px;width:1px;height:38.8px;background:#5a5e66;"></div>
</body></html>
